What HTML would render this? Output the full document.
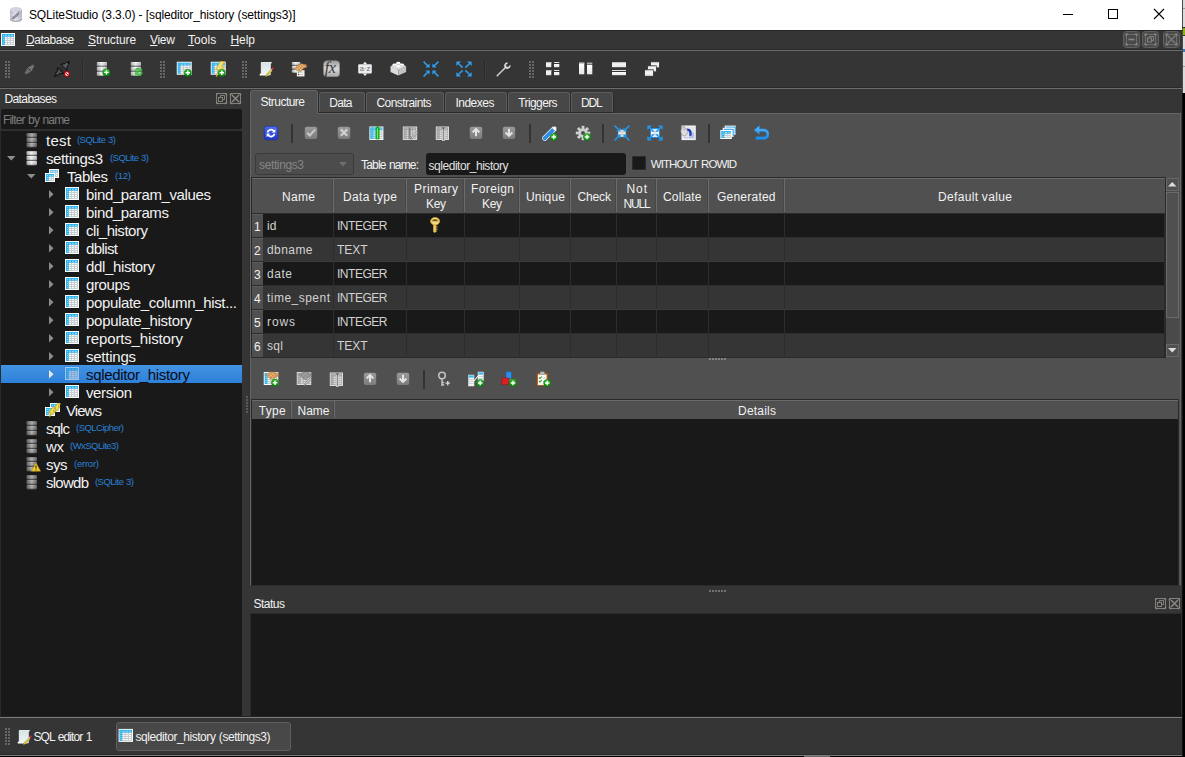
<!DOCTYPE html>
<html><head><meta charset="utf-8"><title>SQLiteStudio (3.3.0) - [sqleditor_history (settings3)]</title>
<style>
html,body{margin:0;padding:0;background:#000;}
body{width:1185px;height:757px;position:relative;overflow:hidden;font-family:"Liberation Sans",sans-serif;}
div,span,svg{position:absolute;display:block;}
span{white-space:nowrap;}
u{text-decoration:underline;text-underline-offset:1px;}
</style></head><body>
<div style="left:1182px;top:0px;width:3px;height:93px;background:#dcdcdc;"></div>
<div style="left:1182px;top:0px;width:1px;height:93px;background:#4a4a4a;"></div>
<div style="left:1183px;top:8px;width:2px;height:1px;background:#9a9a9a;"></div>
<div style="left:1183px;top:27px;width:2px;height:1px;background:#222;"></div>
<div style="left:1183px;top:28px;width:2px;height:7px;background:#8ab800;"></div>
<div style="left:1183px;top:35px;width:2px;height:1px;background:#333;"></div>
<div style="left:1183px;top:49px;width:2px;height:3px;background:#3a7fc0;"></div>
<div style="left:1183px;top:66px;width:2px;height:1px;background:#9a9a9a;"></div>
<div style="left:1182px;top:93px;width:1px;height:663px;background:#111;"></div>
<div style="left:0px;top:0px;width:1182px;height:30px;background:#fff;"></div>
<div style="left:0px;top:30px;width:1182px;height:726px;background:#353535;"></div>
<div style="left:0px;top:30px;width:1182px;height:1px;background:#262626;"></div>
<div style="left:0px;top:49px;width:1182px;height:1px;background:#2a2a2a;"></div>
<div style="left:0px;top:50px;width:1182px;height:1px;background:#6c6c6c;"></div>
<div style="left:0px;top:87px;width:1182px;height:1px;background:#2a2a2a;"></div>
<div style="left:0px;top:88px;width:1182px;height:1px;background:#6c6c6c;"></div>
<div style="left:1px;top:109px;width:241px;height:20px;background:#191919;border-radius:2px;"></div>
<div style="left:0px;top:129px;width:242px;height:2px;background:#2f2f2f;"></div>
<div style="left:0px;top:131px;width:242px;height:586px;background:#191919;"></div>
<div style="left:0px;top:131px;width:1px;height:586px;background:#2a2a2a;"></div>
<div style="left:1px;top:365px;width:241px;height:18px;background:linear-gradient(#4393e3,#2d81d9);"></div>
<div style="left:249px;top:91px;width:1px;height:495px;background:#303030;"></div>
<div style="left:250px;top:113px;width:931px;height:473px;background:#505050;box-sizing:border-box;border:1px solid #646464;border-bottom-color:#3a3a3a;"></div>
<div style="left:250px;top:613px;width:932px;height:104px;background:#2a2a2a;"></div>
<div style="left:251px;top:614px;width:930px;height:102px;background:#191919;"></div>
<div style="left:0px;top:716px;width:1182px;height:1px;background:#222;"></div>
<div style="left:0px;top:717px;width:1182px;height:1px;background:#7a7a7a;"></div>
<div style="left:0px;top:754px;width:1182px;height:1px;background:#2a2a2a;"></div>
<div style="left:0px;top:755px;width:1182px;height:1px;background:#7c7c7c;"></div>
<div style="left:804px;top:756px;width:26px;height:1px;background:#6a6a6a;"></div>
<svg width="0" height="0" style="left:0;top:0"><defs>
<linearGradient id="gdb" x1="0" x2="1" y1="0" y2="0"><stop offset="0" stop-color="#a2a2a2"/><stop offset=".45" stop-color="#efefef"/><stop offset="1" stop-color="#aeaeb6"/></linearGradient>
<linearGradient id="gdbd" x1="0" x2="1" y1="0" y2="0"><stop offset="0" stop-color="#5a5a5a"/><stop offset=".5" stop-color="#adadad"/><stop offset="1" stop-color="#606060"/></linearGradient>
<linearGradient id="gwin" x1="0" x2="0" y1="0" y2="1"><stop offset="0" stop-color="#ffffff"/><stop offset="1" stop-color="#e6e6e6"/></linearGradient>
<linearGradient id="ggreen" x1="0" x2="0" y1="0" y2="1"><stop offset="0" stop-color="#35c435"/><stop offset="1" stop-color="#0a8a0a"/></linearGradient>
<linearGradient id="gblue" x1="0" x2="0" y1="0" y2="1"><stop offset="0" stop-color="#4d6df0"/><stop offset="1" stop-color="#1f36c8"/></linearGradient>
<linearGradient id="ggray" x1="0" x2="0" y1="0" y2="1"><stop offset="0" stop-color="#9a9a9a"/><stop offset="1" stop-color="#7c7c7c"/></linearGradient>
<linearGradient id="gfx" x1="0" x2="0" y1="0" y2="1"><stop offset="0" stop-color="#9b9b9b"/><stop offset=".5" stop-color="#d8d8d8"/><stop offset="1" stop-color="#a8a8a8"/></linearGradient>
<linearGradient id="gcyan" x1="0" x2="0" y1="0" y2="1"><stop offset="0" stop-color="#35b4f2"/><stop offset="1" stop-color="#1d8fe0"/></linearGradient>
<linearGradient id="gtitle" x1="0" x2="1" y1="0" y2="0"><stop offset="0" stop-color="#b4b5c4"/><stop offset=".45" stop-color="#dedfe8"/><stop offset="1" stop-color="#adaebd"/></linearGradient>
<linearGradient id="gpage" x1="0" x2="0" y1="0" y2="1"><stop offset="0" stop-color="#d6e4e4"/><stop offset="1" stop-color="#f0f6f6"/></linearGradient>
<linearGradient id="gundo" x1="0" x2="0" y1="0" y2="1"><stop offset="0" stop-color="#5cbaf8"/><stop offset="1" stop-color="#1c8cec"/></linearGradient>
</defs></svg>
<svg style="left:9px;top:6px" width="14" height="17" viewBox="0 0 14 17"><path d="M1 3.500v10a6 2.600 0 0 0 12 0V3.500z" fill="url(#gtitle)"/><ellipse cx="7" cy="3.500" rx="6" ry="2.600" fill="#d3d4e0"/><path d="M1 7.300a6 2.400 0 0 0 12 0M1 10.600a6 2.400 0 0 0 12 0" fill="none" stroke="#eeeef4" stroke-width=".7" opacity=".8"/><path d="M2.200 12.500L10.800 4.500 9.500 8.200 11.500 7.800 4.500 13.600z" fill="#7f808e" opacity=".85"/><path d="M1.200 13.500a6 2.600 0 0 0 11.600 0" fill="none" stroke="#9a9aa8" stroke-width=".8"/></svg>
<span style="left:29.00px;top:7.00px;height:16px;line-height:16px;font-size:12px;color:#000;letter-spacing:-0.129px;word-spacing:0.129px;">SQLiteStudio (3.3.0) - [sqleditor_history (settings3)]</span>
<svg style="left:1040px;top:0" width="142" height="30" viewBox="0 0 142 30"><path d="M23 14.500H33" stroke="#000" stroke-width="1"/><rect x="68.500" y="9.500" width="9" height="9" fill="none" stroke="#000" stroke-width="1"/><path d="M114 9l10 10M124 9l-10 10" stroke="#000" stroke-width="1.100"/></svg>
<svg style="left:0px;top:32px" width="16" height="16" viewBox="0 0 16 16"><rect x="1" y="1" width="14" height="13" fill="#fafdfd"/><rect x="2" y="2" width="12" height="11" fill="#c4cccc"/><rect x="2" y="2" width="12" height="2.6" fill="#2fb3f0"/><rect x="2" y="2" width="2.7" height="11" fill="#2fb3f0"/><rect x="2.90" y="2.90" width="1" height="1.00" fill="#8adcf9"/><rect x="5.00" y="2.90" width="1.98" height="1.00" fill="#8adcf9"/><rect x="8.00" y="2.90" width="1.98" height="1.00" fill="#8adcf9"/><rect x="11.00" y="2.90" width="1.98" height="1.00" fill="#8adcf9"/><rect x="2.90" y="5.10" width="1" height="1.00" fill="#8adcf9"/><rect x="5.00" y="5.10" width="1.98" height="1.00" fill="#ffffff"/><rect x="8.00" y="5.10" width="1.98" height="1.00" fill="#ffffff"/><rect x="11.00" y="5.10" width="1.98" height="1.00" fill="#ffffff"/><rect x="2.90" y="7.10" width="1" height="1.00" fill="#8adcf9"/><rect x="5.00" y="7.10" width="1.98" height="1.00" fill="#ffffff"/><rect x="8.00" y="7.10" width="1.98" height="1.00" fill="#ffffff"/><rect x="11.00" y="7.10" width="1.98" height="1.00" fill="#ffffff"/><rect x="2.90" y="9.10" width="1" height="1.00" fill="#8adcf9"/><rect x="5.00" y="9.10" width="1.98" height="1.00" fill="#ffffff"/><rect x="8.00" y="9.10" width="1.98" height="1.00" fill="#ffffff"/><rect x="11.00" y="9.10" width="1.98" height="1.00" fill="#ffffff"/><rect x="2.90" y="11.10" width="1" height="1.00" fill="#8adcf9"/><rect x="5.00" y="11.10" width="1.98" height="1.00" fill="#ffffff"/><rect x="8.00" y="11.10" width="1.98" height="1.00" fill="#ffffff"/><rect x="11.00" y="11.10" width="1.98" height="1.00" fill="#ffffff"/></svg>
<span style="left:26.00px;top:32.00px;height:16px;line-height:16px;font-size:12px;color:#f2f2f2;letter-spacing:-0.454px;"><u>D</u>atabase</span>
<span style="left:88.00px;top:32.00px;height:16px;line-height:16px;font-size:12px;color:#f2f2f2;letter-spacing:-0.061px;"><u>S</u>tructure</span>
<span style="left:150.00px;top:32.00px;height:16px;line-height:16px;font-size:12px;color:#f2f2f2;letter-spacing:-0.292px;"><u>V</u>iew</span>
<span style="left:188.00px;top:32.00px;height:16px;line-height:16px;font-size:12px;color:#f2f2f2;letter-spacing:0.050px;"><u>T</u>ools</span>
<span style="left:230.50px;top:32.00px;height:16px;line-height:16px;font-size:12px;color:#f2f2f2;letter-spacing:-0.062px;"><u>H</u>elp</span>
<svg style="left:1123px;top:31px" width="17" height="17" viewBox="0 0 17 17"><rect x=".5" y=".5" width="16" height="16" rx="3" fill="#4a4a4a" stroke="#606060"/><rect x="3.500" y="3.500" width="10" height="10" fill="none" stroke="#77746f" stroke-width=".8"/><path d="M3 5V3H5M12 3H14V5M14 12V14H12M5 14H3V12" fill="none" stroke="#a29e97" stroke-width=".8"/><path d="M5.500 8.500H11.500" stroke="#8a8782" stroke-width="1.600"/></svg>
<svg style="left:1142px;top:31px" width="17" height="17" viewBox="0 0 17 17"><rect x=".5" y=".5" width="16" height="16" rx="3" fill="#4a4a4a" stroke="#606060"/><rect x="3.500" y="3.500" width="10" height="10" fill="none" stroke="#77746f" stroke-width=".8"/><path d="M3 5V3H5M12 3H14V5M14 12V14H12M5 14H3V12" fill="none" stroke="#a29e97" stroke-width=".8"/><rect x="5.500" y="7" width="4" height="4" fill="none" stroke="#8a8782" stroke-width=".9"/><path d="M7.500 6.500V5.500h4v4h-1.500" fill="none" stroke="#8a8782" stroke-width=".9"/></svg>
<svg style="left:1163px;top:31px" width="17" height="17" viewBox="0 0 17 17"><rect x=".5" y=".5" width="16" height="16" rx="3" fill="#4a4a4a" stroke="#606060"/><rect x="3.500" y="3.500" width="10" height="10" fill="none" stroke="#77746f" stroke-width=".8"/><path d="M3 5V3H5M12 3H14V5M14 12V14H12M5 14H3V12" fill="none" stroke="#a29e97" stroke-width=".8"/><path d="M4.500 4.500l8 8M12.500 4.500l-8 8" stroke="#7e7b76" stroke-width="1.300"/></svg>
<svg style="left:5px;top:61px" width="5" height="18" viewBox="0 0 5 18"><rect x="0" y="0" width="2" height="2" fill="#666"/><rect x="3" y="0" width="2" height="2" fill="#666"/><rect x="0" y="3" width="2" height="2" fill="#666"/><rect x="3" y="3" width="2" height="2" fill="#666"/><rect x="0" y="6" width="2" height="2" fill="#666"/><rect x="3" y="6" width="2" height="2" fill="#666"/><rect x="0" y="9" width="2" height="2" fill="#666"/><rect x="3" y="9" width="2" height="2" fill="#666"/><rect x="0" y="12" width="2" height="2" fill="#666"/><rect x="3" y="12" width="2" height="2" fill="#666"/><rect x="0" y="15" width="2" height="2" fill="#666"/><rect x="3" y="15" width="2" height="2" fill="#666"/></svg>
<svg style="left:21px;top:61px" width="16" height="16" viewBox="0 0 16 16"><g transform="translate(.5 .5) rotate(-45 8 8) translate(8 8) scale(.78) translate(-8 -8)"><path d="M-4 8H20" stroke="#434343" stroke-width=".9"/><path d="M.8 6.200H3.500L7.600 4.200V11.800L3.500 9.800H.8z" fill="#6c6c6c"/><path d="M15.200 6.200H12.500L8.400 4.200V11.800L12.500 9.800H15.200z" fill="#747474"/><path d="M8 3.800V12.200" stroke="#2c2c2c" stroke-width=".8"/></g></svg>
<svg style="left:54px;top:61px" width="16" height="16" viewBox="0 0 16 16"><g transform="rotate(-45 8 8)"><path d="M-3.500 8H.5M15.500 8H19" stroke="#0a0a0a" stroke-width="1.200"/><path d="M6 6.800H8.300M6 9.200H8.300" stroke="#151515" stroke-width=".8"/><path d="M0 6.300H2.800L6 3.800V12.200L2.800 9.700H0z" fill="#4d4d58" stroke="#050505" stroke-width=".9" stroke-linejoin="round"/><path d="M16.500 6.300H13.700L10.500 3.800V12.200L13.700 9.700H16.500z" fill="#5a5a5e" stroke="#050505" stroke-width=".9" stroke-linejoin="round"/></g><circle cx="12.900" cy="13" r="3" fill="#c1121a" stroke="#7c0b0f" stroke-width=".5"/><circle cx="12.900" cy="13" r="1.700" fill="#fff"/><path d="M11.400 11.800L14.400 14.200" stroke="#c1121a" stroke-width="1"/></svg>
<div style="left:82px;top:60px;width:1px;height:19px;background:#2a2a2a;"></div>
<div style="left:83px;top:60px;width:1px;height:19px;background:#3d3d3d;"></div>
<svg style="left:94px;top:61px" width="16" height="16" viewBox="0 0 16 16"><rect x="2.8" y="1.05" width="10.2" height="4.30" rx="1" fill="url(#gdb)"/><rect x="2.8" y="1.05" width="10.2" height="1" rx=".5" fill="#fff" opacity=".35"/><rect x="2.8" y="4.35" width="10.2" height="1" rx=".5" fill="#000" opacity=".25"/><rect x="2.8" y="5.85" width="10.2" height="4.30" rx="1" fill="url(#gdb)"/><rect x="2.8" y="5.85" width="10.2" height="1" rx=".5" fill="#fff" opacity=".35"/><rect x="2.8" y="9.15" width="10.2" height="1" rx=".5" fill="#000" opacity=".25"/><rect x="2.8" y="10.65" width="10.2" height="4.30" rx="1" fill="url(#gdb)"/><rect x="2.8" y="10.65" width="10.2" height="1" rx=".5" fill="#fff" opacity=".35"/><rect x="2.8" y="13.95" width="10.2" height="1" rx=".5" fill="#000" opacity=".25"/><circle cx="12.4" cy="11.4" r="3.7" fill="url(#ggreen)" stroke="#0a6e0a" stroke-width=".5"/><path d="M10.2 11.4H14.600000000000001M12.4 9.2V13.600000000000001" stroke="#fff" stroke-width="1.4"/></svg>
<svg style="left:128px;top:61px" width="16" height="16" viewBox="0 0 16 16"><rect x="2.8" y="1.05" width="10.2" height="4.30" rx="1" fill="url(#gdb)"/><rect x="2.8" y="1.05" width="10.2" height="1" rx=".5" fill="#fff" opacity=".35"/><rect x="2.8" y="4.35" width="10.2" height="1" rx=".5" fill="#000" opacity=".25"/><rect x="2.8" y="5.85" width="10.2" height="4.30" rx="1" fill="url(#gdb)"/><rect x="2.8" y="5.85" width="10.2" height="1" rx=".5" fill="#fff" opacity=".35"/><rect x="2.8" y="9.15" width="10.2" height="1" rx=".5" fill="#000" opacity=".25"/><rect x="2.8" y="10.65" width="10.2" height="4.30" rx="1" fill="url(#gdb)"/><rect x="2.8" y="10.65" width="10.2" height="1" rx=".5" fill="#fff" opacity=".35"/><rect x="2.8" y="13.95" width="10.2" height="1" rx=".5" fill="#000" opacity=".25"/><path d="M6.5 10.5a3.6 3.6 0 0 1 6.3-2.2l1-1v3.2h-3.2l1.1-1.1a2.2 2.2 0 0 0-3.8 1.1z" fill="#55d255" stroke="#1c9c1c" stroke-width=".5"/><path d="M14.6 11.2a3.6 3.6 0 0 1-6.3 2.2l-1 1v-3.2h3.2l-1.1 1.1a2.2 2.2 0 0 0 3.8-1.1z" fill="#55d255" stroke="#1c9c1c" stroke-width=".5"/></svg>
<svg style="left:160px;top:61px" width="5" height="18" viewBox="0 0 5 18"><rect x="0" y="0" width="2" height="2" fill="#666"/><rect x="3" y="0" width="2" height="2" fill="#666"/><rect x="0" y="3" width="2" height="2" fill="#666"/><rect x="3" y="3" width="2" height="2" fill="#666"/><rect x="0" y="6" width="2" height="2" fill="#666"/><rect x="3" y="6" width="2" height="2" fill="#666"/><rect x="0" y="9" width="2" height="2" fill="#666"/><rect x="3" y="9" width="2" height="2" fill="#666"/><rect x="0" y="12" width="2" height="2" fill="#666"/><rect x="3" y="12" width="2" height="2" fill="#666"/><rect x="0" y="15" width="2" height="2" fill="#666"/><rect x="3" y="15" width="2" height="2" fill="#666"/></svg>
<svg style="left:176px;top:61px" width="16" height="16" viewBox="0 0 16 16"><rect x="0.75" y="0.75" width="15" height="13" fill="#fafdfd"/><rect x="1.75" y="1.75" width="13" height="11" fill="#c4cccc"/><rect x="1.75" y="1.75" width="13" height="2.6" fill="#2fb3f0"/><rect x="1.75" y="1.75" width="2.7" height="11" fill="#2fb3f0"/><rect x="2.65" y="2.65" width="1" height="1.00" fill="#8adcf9"/><rect x="4.75" y="2.65" width="2.20" height="1.00" fill="#8adcf9"/><rect x="8.08" y="2.65" width="2.20" height="1.00" fill="#8adcf9"/><rect x="11.42" y="2.65" width="2.20" height="1.00" fill="#8adcf9"/><rect x="2.65" y="4.85" width="1" height="1.00" fill="#8adcf9"/><rect x="4.75" y="4.85" width="2.20" height="1.00" fill="#ffffff"/><rect x="8.08" y="4.85" width="2.20" height="1.00" fill="#ffffff"/><rect x="11.42" y="4.85" width="2.20" height="1.00" fill="#ffffff"/><rect x="2.65" y="6.85" width="1" height="1.00" fill="#8adcf9"/><rect x="4.75" y="6.85" width="2.20" height="1.00" fill="#ffffff"/><rect x="8.08" y="6.85" width="2.20" height="1.00" fill="#ffffff"/><rect x="11.42" y="6.85" width="2.20" height="1.00" fill="#ffffff"/><rect x="2.65" y="8.85" width="1" height="1.00" fill="#8adcf9"/><rect x="4.75" y="8.85" width="2.20" height="1.00" fill="#ffffff"/><rect x="8.08" y="8.85" width="2.20" height="1.00" fill="#ffffff"/><rect x="11.42" y="8.85" width="2.20" height="1.00" fill="#ffffff"/><rect x="2.65" y="10.85" width="1" height="1.00" fill="#8adcf9"/><rect x="4.75" y="10.85" width="2.20" height="1.00" fill="#ffffff"/><rect x="8.08" y="10.85" width="2.20" height="1.00" fill="#ffffff"/><rect x="11.42" y="10.85" width="2.20" height="1.00" fill="#ffffff"/><circle cx="11.8" cy="11.8" r="3.6" fill="url(#ggreen)" stroke="#0a6e0a" stroke-width=".5"/><path d="M9.600000000000001 11.8H14.0M11.8 9.600000000000001V14.0" stroke="#fff" stroke-width="1.4"/></svg>
<svg style="left:210px;top:61px" width="16" height="16" viewBox="0 0 16 16"><rect x="0.75" y="0.75" width="15" height="13" fill="#fafdfd"/><rect x="1.75" y="1.75" width="13" height="11" fill="#c4cccc"/><rect x="1.75" y="1.75" width="13" height="2.6" fill="#2fb3f0"/><rect x="1.75" y="1.75" width="2.7" height="11" fill="#2fb3f0"/><rect x="2.65" y="2.65" width="1" height="1.00" fill="#8adcf9"/><rect x="4.75" y="2.65" width="2.20" height="1.00" fill="#8adcf9"/><rect x="8.08" y="2.65" width="2.20" height="1.00" fill="#8adcf9"/><rect x="11.42" y="2.65" width="2.20" height="1.00" fill="#8adcf9"/><rect x="2.65" y="4.85" width="1" height="1.00" fill="#8adcf9"/><rect x="4.75" y="4.85" width="2.20" height="1.00" fill="#ffffff"/><rect x="8.08" y="4.85" width="2.20" height="1.00" fill="#ffffff"/><rect x="11.42" y="4.85" width="2.20" height="1.00" fill="#ffffff"/><rect x="2.65" y="6.85" width="1" height="1.00" fill="#8adcf9"/><rect x="4.75" y="6.85" width="2.20" height="1.00" fill="#ffffff"/><rect x="8.08" y="6.85" width="2.20" height="1.00" fill="#ffffff"/><rect x="11.42" y="6.85" width="2.20" height="1.00" fill="#ffffff"/><rect x="2.65" y="8.85" width="1" height="1.00" fill="#8adcf9"/><rect x="4.75" y="8.85" width="2.20" height="1.00" fill="#ffffff"/><rect x="8.08" y="8.85" width="2.20" height="1.00" fill="#ffffff"/><rect x="11.42" y="8.85" width="2.20" height="1.00" fill="#ffffff"/><rect x="2.65" y="10.85" width="1" height="1.00" fill="#8adcf9"/><rect x="4.75" y="10.85" width="2.20" height="1.00" fill="#ffffff"/><rect x="8.08" y="10.85" width="2.20" height="1.00" fill="#ffffff"/><rect x="11.42" y="10.85" width="2.20" height="1.00" fill="#ffffff"/><path d="M4.300 0L7.600 0 5.200 3.300 7.200 3.300 1.300 9.300 3 5 .8 5z" transform="translate(4.500 .4) scale(1.350 1.660)" fill="#f3e27a" stroke="#c2a51a" stroke-width=".5" stroke-linejoin="round"/><circle cx="11.8" cy="11.8" r="3.6" fill="url(#ggreen)" stroke="#0a6e0a" stroke-width=".5"/><path d="M9.600000000000001 11.8H14.0M11.8 9.600000000000001V14.0" stroke="#fff" stroke-width="1.4"/></svg>
<svg style="left:242px;top:61px" width="5" height="18" viewBox="0 0 5 18"><rect x="0" y="0" width="2" height="2" fill="#666"/><rect x="3" y="0" width="2" height="2" fill="#666"/><rect x="0" y="3" width="2" height="2" fill="#666"/><rect x="3" y="3" width="2" height="2" fill="#666"/><rect x="0" y="6" width="2" height="2" fill="#666"/><rect x="3" y="6" width="2" height="2" fill="#666"/><rect x="0" y="9" width="2" height="2" fill="#666"/><rect x="3" y="9" width="2" height="2" fill="#666"/><rect x="0" y="12" width="2" height="2" fill="#666"/><rect x="3" y="12" width="2" height="2" fill="#666"/><rect x="0" y="15" width="2" height="2" fill="#666"/><rect x="3" y="15" width="2" height="2" fill="#666"/></svg>
<svg style="left:258px;top:61px" width="16" height="16" viewBox="0 0 16 16"><path d="M3.300 1.500h10.200l-1.200 1.500v10.700h-10.300l1.300-1.700z" fill="url(#gpage)" stroke="#fbffff" stroke-width=".8"/><path d="M1.800 13.800h9.500" stroke="#fff" stroke-width="1.300"/><g transform="translate(0 .8)"><path d="M7.300 15l.6-2 5-5 1.300 1.300-5 5z" fill="#e9d85c" stroke="#8a7410" stroke-width=".45"/><path d="M8.800 13.800l1-1M10 12.600l1-1M11.200 11.400l1-1" stroke="#a08a1c" stroke-width=".5"/><path d="M13.200 8.300l.8-.8" stroke="#fff" stroke-width="1.200"/><circle cx="14.600" cy="6.800" r="1.100" fill="#e02a2a"/></g></svg>
<svg style="left:291px;top:61px" width="16" height="16" viewBox="0 0 16 16"><rect x="0.8" y="1.05" width="8.6" height="3.33" rx="1" fill="url(#gdb)"/><rect x="0.8" y="1.05" width="8.6" height="1" rx=".5" fill="#fff" opacity=".35"/><rect x="0.8" y="3.38" width="8.6" height="1" rx=".5" fill="#000" opacity=".25"/><rect x="0.8" y="4.88" width="8.6" height="3.33" rx="1" fill="url(#gdb)"/><rect x="0.8" y="4.88" width="8.6" height="1" rx=".5" fill="#fff" opacity=".35"/><rect x="0.8" y="7.22" width="8.6" height="1" rx=".5" fill="#000" opacity=".25"/><rect x="0.8" y="8.72" width="8.6" height="3.33" rx="1" fill="url(#gdb)"/><rect x="0.8" y="8.72" width="8.6" height="1" rx=".5" fill="#fff" opacity=".35"/><rect x="0.8" y="11.05" width="8.6" height="1" rx=".5" fill="#000" opacity=".25"/><rect x="6" y="9.200" width="7.300" height="6" fill="#f4f4f4" stroke="#d0d0d0" stroke-width=".4"/><rect x="7" y="10.500" width="1.300" height="1.300" fill="#22aa22"/><rect x="7" y="12.800" width="1.300" height="1.300" fill="#d62728"/><path d="M9 11.200h3.300M9 13.500h3.300" stroke="#b4b4b4" stroke-width=".7"/><path d="M3.500 8L6 4.600 10.500 2.800 15.300 3.800 15.800 6 12.200 7.600 10 10.600 7 9.600z" fill="#e8b478" stroke="#a86a2a" stroke-width=".5" stroke-linejoin="round"/><path d="M5.500 6l3.500 3.800M7.500 4.500l3.500 4M9.500 3.500l3.500 3.500M12 3.200l3 2.600M5 8.500L10 3.200M7.500 9.500l5.500-6M10.500 9.500l4.500-5" stroke="#a86a2a" stroke-width=".4" fill="none"/></svg>
<svg style="left:323px;top:60px" width="17" height="17" viewBox="0 0 17 17"><rect x=".6" y=".8" width="16" height="16" rx="3.500" fill="url(#gfx)" stroke="#8e8e8e" stroke-width=".6"/><text x="1.800" y="12.800" font-family="Liberation Serif,serif" font-style="italic" font-size="16" fill="#383838" letter-spacing="-.6">fx</text></svg>
<svg style="left:357px;top:61px" width="16" height="16" viewBox="0 0 16 16"><rect x="1.200" y="3.300" width="13.600" height="9.200" rx="1" fill="#ececec"/><path d="M8 .8l2.200 2.500h-4.400zM8 15l2.200-2.500h-4.400z" fill="#f0f0f0"/><text x="2.800" y="10.300" font-family="Liberation Sans,sans-serif" font-size="7.500" fill="#6e6e6e">a·z</text></svg>
<svg style="left:390px;top:60px" width="17" height="17" viewBox="0 0 17 17"><path d="M.5 6.200l7.800 3.600v5.700l-7.800-3.600z" fill="#dcdcdc"/><path d="M16.100 6.200l-7.800 3.600v5.700l7.800-3.600z" fill="#c2c2c2"/><path d="M.5 6.200L8.300 2.600 16.100 6.200 8.300 9.800z" fill="#efefef"/><path d="M6.200000000000001 2.9000000000000004v1.300a2.100 1.100 0 0 0 4.200 0v-1.300z" fill="#d0d0d0"/><ellipse cx="8.3" cy="2.9000000000000004" rx="2.100" ry="1.100" fill="#fbfbfb"/><path d="M2.4999999999999996 4.6000000000000005v1.300a2.100 1.100 0 0 0 4.200 0v-1.300z" fill="#d0d0d0"/><ellipse cx="4.6" cy="4.6000000000000005" rx="2.100" ry="1.100" fill="#fbfbfb"/><path d="M9.9 4.6000000000000005v1.300a2.100 1.100 0 0 0 4.200 0v-1.300z" fill="#d0d0d0"/><ellipse cx="12" cy="4.6000000000000005" rx="2.100" ry="1.100" fill="#fbfbfb"/><path d="M6.200000000000001 6.4v1.300a2.100 1.100 0 0 0 4.200 0v-1.300z" fill="#d0d0d0"/><ellipse cx="8.3" cy="6.4" rx="2.100" ry="1.100" fill="#fbfbfb"/></svg>
<svg style="left:423px;top:61px" width="16" height="16" viewBox="0 0 16 16"><g transform="translate(8 8) scale(1 1) translate(-7.800 -7.800)"><path d="M.4 .4L4.500 4.500" stroke="#2f9ff0" stroke-width="1.500"/><path d="M6.400 6.400V2.200L2.200 6.400z" fill="#2f9ff0"/></g><g transform="translate(8 8) scale(-1 1) translate(-7.800 -7.800)"><path d="M.4 .4L4.500 4.500" stroke="#2f9ff0" stroke-width="1.500"/><path d="M6.400 6.400V2.200L2.200 6.400z" fill="#2f9ff0"/></g><g transform="translate(8 8) scale(1 -1) translate(-7.800 -7.800)"><path d="M.4 .4L4.500 4.500" stroke="#2f9ff0" stroke-width="1.500"/><path d="M6.400 6.400V2.200L2.200 6.400z" fill="#2f9ff0"/></g><g transform="translate(8 8) scale(-1 -1) translate(-7.800 -7.800)"><path d="M.4 .4L4.500 4.500" stroke="#2f9ff0" stroke-width="1.500"/><path d="M6.400 6.400V2.200L2.200 6.400z" fill="#2f9ff0"/></g></svg>
<svg style="left:456px;top:61px" width="16" height="16" viewBox="0 0 16 16"><g transform="translate(8 8) scale(1 1) translate(-7.800 -7.800)"><path d="M6.400 6.400L2.500 2.500" stroke="#2f9ff0" stroke-width="1.500"/><path d="M.2 .2H4.800L.2 4.800z" fill="#2f9ff0"/></g><g transform="translate(8 8) scale(-1 1) translate(-7.800 -7.800)"><path d="M6.400 6.400L2.500 2.500" stroke="#2f9ff0" stroke-width="1.500"/><path d="M.2 .2H4.800L.2 4.800z" fill="#2f9ff0"/></g><g transform="translate(8 8) scale(1 -1) translate(-7.800 -7.800)"><path d="M6.400 6.400L2.500 2.500" stroke="#2f9ff0" stroke-width="1.500"/><path d="M.2 .2H4.800L.2 4.800z" fill="#2f9ff0"/></g><g transform="translate(8 8) scale(-1 -1) translate(-7.800 -7.800)"><path d="M6.400 6.400L2.500 2.500" stroke="#2f9ff0" stroke-width="1.500"/><path d="M.2 .2H4.800L.2 4.800z" fill="#2f9ff0"/></g></svg>
<div style="left:484px;top:60px;width:1px;height:19px;background:#2a2a2a;"></div>
<div style="left:485px;top:60px;width:1px;height:19px;background:#3d3d3d;"></div>
<svg style="left:496px;top:61px" width="16" height="16" viewBox="0 0 16 16"><path d="M1.2 14.8L9.5 6.5" stroke="#cfcfcf" stroke-width="1.5" stroke-linecap="round"/><path d="M9.2 7a3.3 3.3 0 0 1 1.6-5.4l.9.3-2 2 .6 1.8 1.8.6 2-2 .3.9a3.3 3.3 0 0 1-5.2 1.8z" fill="#d9d9d9" stroke="#eee" stroke-width=".4"/></svg>
<svg style="left:529px;top:61px" width="5" height="18" viewBox="0 0 5 18"><rect x="0" y="0" width="2" height="2" fill="#666"/><rect x="3" y="0" width="2" height="2" fill="#666"/><rect x="0" y="3" width="2" height="2" fill="#666"/><rect x="3" y="3" width="2" height="2" fill="#666"/><rect x="0" y="6" width="2" height="2" fill="#666"/><rect x="3" y="6" width="2" height="2" fill="#666"/><rect x="0" y="9" width="2" height="2" fill="#666"/><rect x="3" y="9" width="2" height="2" fill="#666"/><rect x="0" y="12" width="2" height="2" fill="#666"/><rect x="3" y="12" width="2" height="2" fill="#666"/><rect x="0" y="15" width="2" height="2" fill="#666"/><rect x="3" y="15" width="2" height="2" fill="#666"/></svg>
<svg style="left:545px;top:61px" width="16" height="16" viewBox="0 0 16 16"><rect x="1" y="1" width="5.3" height="5.2" fill="url(#gwin)"/><rect x="1" y="1" width="5.3" height="1.200" fill="#c4c4c4"/><rect x="9" y="1" width="5.3" height="1" fill="#e2e2e2"/><rect x="9" y="3" width="5.3" height="3.2" fill="url(#gwin)"/><rect x="1" y="9" width="5.3" height="5.2" fill="url(#gwin)"/><rect x="1" y="9" width="5.3" height="1.200" fill="#c4c4c4"/><rect x="9" y="9" width="5.3" height="1" fill="#e2e2e2"/><rect x="9" y="11" width="5.3" height="3.2" fill="url(#gwin)"/></svg>
<svg style="left:578px;top:61px" width="16" height="16" viewBox="0 0 16 16"><rect x="1" y="1.7" width="5.3" height="11.6" fill="url(#gwin)"/><rect x="1" y="1.7" width="5.3" height="1.200" fill="#c4c4c4"/><rect x="9" y="1.7" width="5.3" height="1" fill="#e2e2e2"/><rect x="9" y="3.7" width="5.3" height="9.6" fill="url(#gwin)"/></svg>
<svg style="left:611px;top:61px" width="16" height="16" viewBox="0 0 16 16"><rect x="1" y="1" width="14" height="5.2" fill="url(#gwin)"/><rect x="1" y="1" width="14" height="1.200" fill="#c4c4c4"/><rect x="1" y="9" width="14" height="1" fill="#e2e2e2"/><rect x="1" y="11" width="14" height="3.2" fill="url(#gwin)"/></svg>
<svg style="left:644px;top:61px" width="16" height="16" viewBox="0 0 16 16"><rect x="6.3" y="0.30000000000000004" width="9.400" height="6.699999999999999" fill="#454545"/><rect x="7" y="1" width="8" height="5.3" fill="url(#gwin)"/><rect x="7" y="1" width="8" height="1.200" fill="#c4c4c4"/><rect x="3.3" y="4.3" width="9.400" height="6.699999999999999" fill="#454545"/><rect x="4" y="5" width="8" height="5.3" fill="url(#gwin)"/><rect x="4" y="5" width="8" height="1.200" fill="#c4c4c4"/><rect x="0.30000000000000004" y="8.3" width="9.400" height="7.199999999999999" fill="#454545"/><rect x="1" y="9" width="8" height="5.8" fill="url(#gwin)"/><rect x="1" y="9" width="8" height="1.200" fill="#c4c4c4"/></svg>
<span style="left:4.50px;top:91.00px;height:16px;line-height:16px;font-size:12px;color:#f2f2f2;letter-spacing:-0.609px;">Databases</span>
<svg style="left:216px;top:93px" width="26" height="12" viewBox="0 0 26 12"><rect x="0.5" y=".5" width="10" height="10" rx="1.800" fill="none" stroke="#8c8882" stroke-width=".9"/><path d="M0.3 2.500V.8a.5.5 0 0 1 .5-.5H2.5M8.5 .3h1.700a.5.5 0 0 1 .5.5V2.500M10.7 8.500v1.700a.5.5 0 0 1-.5.5H8.5M2.5 10.700H0.8a.5.5 0 0 1-.5-.5V8.500" fill="none" stroke="#b0aca4" stroke-width=".7"/><rect x="2.500" y="4.500" width="4" height="4" fill="none" stroke="#8c8882" stroke-width=".9"/><path d="M4.500 4V2.500h4v4H7" fill="none" stroke="#8c8882" stroke-width=".9"/><rect x="14.5" y=".5" width="10" height="10" rx="1.800" fill="none" stroke="#8c8882" stroke-width=".9"/><path d="M14.3 2.500V.8a.5.5 0 0 1 .5-.5H16.5M22.5 .3h1.700a.5.5 0 0 1 .5.5V2.500M24.7 8.500v1.700a.5.5 0 0 1-.5.5H22.5M16.5 10.700H14.8a.5.5 0 0 1-.5-.5V8.500" fill="none" stroke="#b0aca4" stroke-width=".7"/><path d="M16 2l7 7M23 2l-7 7" stroke="#8c8882" stroke-width="1.500"/></svg>
<span style="left:3.00px;top:112.00px;height:16px;line-height:16px;font-size:12px;color:#7d7d7d;letter-spacing:-0.818px;word-spacing:0.818px;">Filter by name</span>
<svg style="left:26px;top:132px" width="12" height="16" viewBox="0 0 12 16"><rect x="0.5" y="1.25" width="10.5" height="4.33" rx="1" fill="url(#gdbd)"/><rect x="0.5" y="1.25" width="10.5" height="1" rx=".5" fill="#fff" opacity=".12"/><rect x="0.5" y="4.58" width="10.5" height="1" rx=".5" fill="#000" opacity=".25"/><rect x="0.5" y="6.08" width="10.5" height="4.33" rx="1" fill="url(#gdbd)"/><rect x="0.5" y="6.08" width="10.5" height="1" rx=".5" fill="#fff" opacity=".12"/><rect x="0.5" y="9.42" width="10.5" height="1" rx=".5" fill="#000" opacity=".25"/><rect x="0.5" y="10.92" width="10.5" height="4.33" rx="1" fill="url(#gdbd)"/><rect x="0.5" y="10.92" width="10.5" height="1" rx=".5" fill="#fff" opacity=".12"/><rect x="0.5" y="14.25" width="10.5" height="1" rx=".5" fill="#000" opacity=".25"/></svg>
<span style="left:46.00px;top:131.00px;height:19px;line-height:19px;font-size:15px;color:#f2f2f2;letter-spacing:0.271px;">test</span>
<span style="left:77.00px;top:132.75px;height:13.5px;line-height:13.5px;font-size:9.5px;color:#2a80d6;letter-spacing:-0.539px;word-spacing:0.539px;">(SQLite 3)</span>
<svg style="left:7px;top:155.5px" width="9" height="5" viewBox="0 0 9 5"><path d="M0 0h8.500L4.250 4.500z" fill="#8c8c8c"/></svg>
<svg style="left:26px;top:150px" width="12" height="16" viewBox="0 0 12 16"><rect x="0.5" y="1.25" width="10.5" height="4.33" rx="1" fill="url(#gdb)"/><rect x="0.5" y="1.25" width="10.5" height="1" rx=".5" fill="#fff" opacity=".35"/><rect x="0.5" y="4.58" width="10.5" height="1" rx=".5" fill="#000" opacity=".25"/><rect x="0.5" y="6.08" width="10.5" height="4.33" rx="1" fill="url(#gdb)"/><rect x="0.5" y="6.08" width="10.5" height="1" rx=".5" fill="#fff" opacity=".35"/><rect x="0.5" y="9.42" width="10.5" height="1" rx=".5" fill="#000" opacity=".25"/><rect x="0.5" y="10.92" width="10.5" height="4.33" rx="1" fill="url(#gdb)"/><rect x="0.5" y="10.92" width="10.5" height="1" rx=".5" fill="#fff" opacity=".35"/><rect x="0.5" y="14.25" width="10.5" height="1" rx=".5" fill="#000" opacity=".25"/></svg>
<span style="left:46.00px;top:149.00px;height:19px;line-height:19px;font-size:15px;color:#f2f2f2;letter-spacing:-0.383px;">settings3</span>
<span style="left:110.00px;top:150.75px;height:13.5px;line-height:13.5px;font-size:9.5px;color:#2a80d6;letter-spacing:-0.539px;word-spacing:0.539px;">(SQLite 3)</span>
<svg style="left:27px;top:173.5px" width="9" height="5" viewBox="0 0 9 5"><path d="M0 0h8.500L4.250 4.500z" fill="#8c8c8c"/></svg>
<svg style="left:45px;top:168px" width="16" height="16" viewBox="0 0 16 16"><rect x="4" y="1" width="10" height="9" fill="#fafdfd"/><rect x="5" y="2" width="8" height="7" fill="#c4cccc"/><rect x="5" y="2" width="8" height="2.500" fill="#7cc4ec"/><rect x="5" y="2" width="2.600" height="7" fill="#7cc4ec"/><rect x="5.9" y="3" width="1" height="1" fill="#bfe4f6"/><rect x="8" y="3" width="2" height="1" fill="#bfe4f6"/><rect x="11" y="3" width="1.200" height="1" fill="#bfe4f6"/><rect x="5.9" y="5" width="1" height="1" fill="#bfe4f6"/><rect x="8" y="5" width="2" height="1" fill="#fff"/><rect x="11" y="5" width="1.200" height="1" fill="#fff"/><rect x="5.9" y="7" width="1" height="1" fill="#bfe4f6"/><rect x="8" y="7" width="2" height="1" fill="#fff"/><rect x="11" y="7" width="1.200" height="1" fill="#fff"/><rect x="0" y="5" width="10" height="9" fill="#fafdfd"/><rect x="1" y="6" width="8" height="7" fill="#c4cccc"/><rect x="1" y="6" width="8" height="2.500" fill="#30b4f1"/><rect x="1" y="6" width="2.600" height="7" fill="#30b4f1"/><rect x="1.9" y="7" width="1" height="1" fill="#9adff9"/><rect x="4" y="7" width="2" height="1" fill="#9adff9"/><rect x="7" y="7" width="1.200" height="1" fill="#9adff9"/><rect x="1.9" y="9" width="1" height="1" fill="#9adff9"/><rect x="4" y="9" width="2" height="1" fill="#fff"/><rect x="7" y="9" width="1.200" height="1" fill="#fff"/><rect x="1.9" y="11" width="1" height="1" fill="#9adff9"/><rect x="4" y="11" width="2" height="1" fill="#fff"/><rect x="7" y="11" width="1.200" height="1" fill="#fff"/></svg>
<span style="left:67.00px;top:167.00px;height:19px;line-height:19px;font-size:15px;color:#f2f2f2;letter-spacing:-0.475px;">Tables</span>
<span style="left:115.00px;top:168.75px;height:13.5px;line-height:13.5px;font-size:9.5px;color:#2a80d6;letter-spacing:-0.292px;">(12)</span>
<svg style="left:49px;top:189.5px" width="5" height="9" viewBox="0 0 5 9"><path d="M0 0v8.500L4.500 4.250z" fill="#8c8c8c"/></svg>
<svg style="left:64px;top:186px" width="16" height="16" viewBox="0 0 16 16"><rect x="1" y="1" width="14" height="13" fill="#fafdfd"/><rect x="2" y="2" width="12" height="11" fill="#c4cccc"/><rect x="2" y="2" width="12" height="2.6" fill="#2fb3f0"/><rect x="2" y="2" width="2.7" height="11" fill="#2fb3f0"/><rect x="2.90" y="2.90" width="1" height="1.00" fill="#8adcf9"/><rect x="5.00" y="2.90" width="1.98" height="1.00" fill="#8adcf9"/><rect x="8.00" y="2.90" width="1.98" height="1.00" fill="#8adcf9"/><rect x="11.00" y="2.90" width="1.98" height="1.00" fill="#8adcf9"/><rect x="2.90" y="5.10" width="1" height="1.00" fill="#8adcf9"/><rect x="5.00" y="5.10" width="1.98" height="1.00" fill="#ffffff"/><rect x="8.00" y="5.10" width="1.98" height="1.00" fill="#ffffff"/><rect x="11.00" y="5.10" width="1.98" height="1.00" fill="#ffffff"/><rect x="2.90" y="7.10" width="1" height="1.00" fill="#8adcf9"/><rect x="5.00" y="7.10" width="1.98" height="1.00" fill="#ffffff"/><rect x="8.00" y="7.10" width="1.98" height="1.00" fill="#ffffff"/><rect x="11.00" y="7.10" width="1.98" height="1.00" fill="#ffffff"/><rect x="2.90" y="9.10" width="1" height="1.00" fill="#8adcf9"/><rect x="5.00" y="9.10" width="1.98" height="1.00" fill="#ffffff"/><rect x="8.00" y="9.10" width="1.98" height="1.00" fill="#ffffff"/><rect x="11.00" y="9.10" width="1.98" height="1.00" fill="#ffffff"/><rect x="2.90" y="11.10" width="1" height="1.00" fill="#8adcf9"/><rect x="5.00" y="11.10" width="1.98" height="1.00" fill="#ffffff"/><rect x="8.00" y="11.10" width="1.98" height="1.00" fill="#ffffff"/><rect x="11.00" y="11.10" width="1.98" height="1.00" fill="#ffffff"/></svg>
<span style="left:86.00px;top:185.00px;height:19px;line-height:19px;font-size:15px;color:#f2f2f2;letter-spacing:-0.371px;">bind_param_values</span>
<svg style="left:49px;top:207.5px" width="5" height="9" viewBox="0 0 5 9"><path d="M0 0v8.500L4.500 4.250z" fill="#8c8c8c"/></svg>
<svg style="left:64px;top:204px" width="16" height="16" viewBox="0 0 16 16"><rect x="1" y="1" width="14" height="13" fill="#fafdfd"/><rect x="2" y="2" width="12" height="11" fill="#c4cccc"/><rect x="2" y="2" width="12" height="2.6" fill="#2fb3f0"/><rect x="2" y="2" width="2.7" height="11" fill="#2fb3f0"/><rect x="2.90" y="2.90" width="1" height="1.00" fill="#8adcf9"/><rect x="5.00" y="2.90" width="1.98" height="1.00" fill="#8adcf9"/><rect x="8.00" y="2.90" width="1.98" height="1.00" fill="#8adcf9"/><rect x="11.00" y="2.90" width="1.98" height="1.00" fill="#8adcf9"/><rect x="2.90" y="5.10" width="1" height="1.00" fill="#8adcf9"/><rect x="5.00" y="5.10" width="1.98" height="1.00" fill="#ffffff"/><rect x="8.00" y="5.10" width="1.98" height="1.00" fill="#ffffff"/><rect x="11.00" y="5.10" width="1.98" height="1.00" fill="#ffffff"/><rect x="2.90" y="7.10" width="1" height="1.00" fill="#8adcf9"/><rect x="5.00" y="7.10" width="1.98" height="1.00" fill="#ffffff"/><rect x="8.00" y="7.10" width="1.98" height="1.00" fill="#ffffff"/><rect x="11.00" y="7.10" width="1.98" height="1.00" fill="#ffffff"/><rect x="2.90" y="9.10" width="1" height="1.00" fill="#8adcf9"/><rect x="5.00" y="9.10" width="1.98" height="1.00" fill="#ffffff"/><rect x="8.00" y="9.10" width="1.98" height="1.00" fill="#ffffff"/><rect x="11.00" y="9.10" width="1.98" height="1.00" fill="#ffffff"/><rect x="2.90" y="11.10" width="1" height="1.00" fill="#8adcf9"/><rect x="5.00" y="11.10" width="1.98" height="1.00" fill="#ffffff"/><rect x="8.00" y="11.10" width="1.98" height="1.00" fill="#ffffff"/><rect x="11.00" y="11.10" width="1.98" height="1.00" fill="#ffffff"/></svg>
<span style="left:86.00px;top:203.00px;height:19px;line-height:19px;font-size:15px;color:#f2f2f2;letter-spacing:-0.375px;">bind_params</span>
<svg style="left:49px;top:225.5px" width="5" height="9" viewBox="0 0 5 9"><path d="M0 0v8.500L4.500 4.250z" fill="#8c8c8c"/></svg>
<svg style="left:64px;top:222px" width="16" height="16" viewBox="0 0 16 16"><rect x="1" y="1" width="14" height="13" fill="#fafdfd"/><rect x="2" y="2" width="12" height="11" fill="#c4cccc"/><rect x="2" y="2" width="12" height="2.6" fill="#2fb3f0"/><rect x="2" y="2" width="2.7" height="11" fill="#2fb3f0"/><rect x="2.90" y="2.90" width="1" height="1.00" fill="#8adcf9"/><rect x="5.00" y="2.90" width="1.98" height="1.00" fill="#8adcf9"/><rect x="8.00" y="2.90" width="1.98" height="1.00" fill="#8adcf9"/><rect x="11.00" y="2.90" width="1.98" height="1.00" fill="#8adcf9"/><rect x="2.90" y="5.10" width="1" height="1.00" fill="#8adcf9"/><rect x="5.00" y="5.10" width="1.98" height="1.00" fill="#ffffff"/><rect x="8.00" y="5.10" width="1.98" height="1.00" fill="#ffffff"/><rect x="11.00" y="5.10" width="1.98" height="1.00" fill="#ffffff"/><rect x="2.90" y="7.10" width="1" height="1.00" fill="#8adcf9"/><rect x="5.00" y="7.10" width="1.98" height="1.00" fill="#ffffff"/><rect x="8.00" y="7.10" width="1.98" height="1.00" fill="#ffffff"/><rect x="11.00" y="7.10" width="1.98" height="1.00" fill="#ffffff"/><rect x="2.90" y="9.10" width="1" height="1.00" fill="#8adcf9"/><rect x="5.00" y="9.10" width="1.98" height="1.00" fill="#ffffff"/><rect x="8.00" y="9.10" width="1.98" height="1.00" fill="#ffffff"/><rect x="11.00" y="9.10" width="1.98" height="1.00" fill="#ffffff"/><rect x="2.90" y="11.10" width="1" height="1.00" fill="#8adcf9"/><rect x="5.00" y="11.10" width="1.98" height="1.00" fill="#ffffff"/><rect x="8.00" y="11.10" width="1.98" height="1.00" fill="#ffffff"/><rect x="11.00" y="11.10" width="1.98" height="1.00" fill="#ffffff"/></svg>
<span style="left:86.00px;top:221.00px;height:19px;line-height:19px;font-size:15px;color:#f2f2f2;letter-spacing:-0.469px;">cli_history</span>
<svg style="left:49px;top:243.5px" width="5" height="9" viewBox="0 0 5 9"><path d="M0 0v8.500L4.500 4.250z" fill="#8c8c8c"/></svg>
<svg style="left:64px;top:240px" width="16" height="16" viewBox="0 0 16 16"><rect x="1" y="1" width="14" height="13" fill="#fafdfd"/><rect x="2" y="2" width="12" height="11" fill="#c4cccc"/><rect x="2" y="2" width="12" height="2.6" fill="#2fb3f0"/><rect x="2" y="2" width="2.7" height="11" fill="#2fb3f0"/><rect x="2.90" y="2.90" width="1" height="1.00" fill="#8adcf9"/><rect x="5.00" y="2.90" width="1.98" height="1.00" fill="#8adcf9"/><rect x="8.00" y="2.90" width="1.98" height="1.00" fill="#8adcf9"/><rect x="11.00" y="2.90" width="1.98" height="1.00" fill="#8adcf9"/><rect x="2.90" y="5.10" width="1" height="1.00" fill="#8adcf9"/><rect x="5.00" y="5.10" width="1.98" height="1.00" fill="#ffffff"/><rect x="8.00" y="5.10" width="1.98" height="1.00" fill="#ffffff"/><rect x="11.00" y="5.10" width="1.98" height="1.00" fill="#ffffff"/><rect x="2.90" y="7.10" width="1" height="1.00" fill="#8adcf9"/><rect x="5.00" y="7.10" width="1.98" height="1.00" fill="#ffffff"/><rect x="8.00" y="7.10" width="1.98" height="1.00" fill="#ffffff"/><rect x="11.00" y="7.10" width="1.98" height="1.00" fill="#ffffff"/><rect x="2.90" y="9.10" width="1" height="1.00" fill="#8adcf9"/><rect x="5.00" y="9.10" width="1.98" height="1.00" fill="#ffffff"/><rect x="8.00" y="9.10" width="1.98" height="1.00" fill="#ffffff"/><rect x="11.00" y="9.10" width="1.98" height="1.00" fill="#ffffff"/><rect x="2.90" y="11.10" width="1" height="1.00" fill="#8adcf9"/><rect x="5.00" y="11.10" width="1.98" height="1.00" fill="#ffffff"/><rect x="8.00" y="11.10" width="1.98" height="1.00" fill="#ffffff"/><rect x="11.00" y="11.10" width="1.98" height="1.00" fill="#ffffff"/></svg>
<span style="left:86.00px;top:239.00px;height:19px;line-height:19px;font-size:15px;color:#f2f2f2;letter-spacing:-0.600px;">dblist</span>
<svg style="left:49px;top:261.5px" width="5" height="9" viewBox="0 0 5 9"><path d="M0 0v8.500L4.500 4.250z" fill="#8c8c8c"/></svg>
<svg style="left:64px;top:258px" width="16" height="16" viewBox="0 0 16 16"><rect x="1" y="1" width="14" height="13" fill="#fafdfd"/><rect x="2" y="2" width="12" height="11" fill="#c4cccc"/><rect x="2" y="2" width="12" height="2.6" fill="#2fb3f0"/><rect x="2" y="2" width="2.7" height="11" fill="#2fb3f0"/><rect x="2.90" y="2.90" width="1" height="1.00" fill="#8adcf9"/><rect x="5.00" y="2.90" width="1.98" height="1.00" fill="#8adcf9"/><rect x="8.00" y="2.90" width="1.98" height="1.00" fill="#8adcf9"/><rect x="11.00" y="2.90" width="1.98" height="1.00" fill="#8adcf9"/><rect x="2.90" y="5.10" width="1" height="1.00" fill="#8adcf9"/><rect x="5.00" y="5.10" width="1.98" height="1.00" fill="#ffffff"/><rect x="8.00" y="5.10" width="1.98" height="1.00" fill="#ffffff"/><rect x="11.00" y="5.10" width="1.98" height="1.00" fill="#ffffff"/><rect x="2.90" y="7.10" width="1" height="1.00" fill="#8adcf9"/><rect x="5.00" y="7.10" width="1.98" height="1.00" fill="#ffffff"/><rect x="8.00" y="7.10" width="1.98" height="1.00" fill="#ffffff"/><rect x="11.00" y="7.10" width="1.98" height="1.00" fill="#ffffff"/><rect x="2.90" y="9.10" width="1" height="1.00" fill="#8adcf9"/><rect x="5.00" y="9.10" width="1.98" height="1.00" fill="#ffffff"/><rect x="8.00" y="9.10" width="1.98" height="1.00" fill="#ffffff"/><rect x="11.00" y="9.10" width="1.98" height="1.00" fill="#ffffff"/><rect x="2.90" y="11.10" width="1" height="1.00" fill="#8adcf9"/><rect x="5.00" y="11.10" width="1.98" height="1.00" fill="#ffffff"/><rect x="8.00" y="11.10" width="1.98" height="1.00" fill="#ffffff"/><rect x="11.00" y="11.10" width="1.98" height="1.00" fill="#ffffff"/></svg>
<span style="left:86.00px;top:257.00px;height:19px;line-height:19px;font-size:15px;color:#f2f2f2;letter-spacing:-0.356px;">ddl_history</span>
<svg style="left:49px;top:279.5px" width="5" height="9" viewBox="0 0 5 9"><path d="M0 0v8.500L4.500 4.250z" fill="#8c8c8c"/></svg>
<svg style="left:64px;top:276px" width="16" height="16" viewBox="0 0 16 16"><rect x="1" y="1" width="14" height="13" fill="#fafdfd"/><rect x="2" y="2" width="12" height="11" fill="#c4cccc"/><rect x="2" y="2" width="12" height="2.6" fill="#2fb3f0"/><rect x="2" y="2" width="2.7" height="11" fill="#2fb3f0"/><rect x="2.90" y="2.90" width="1" height="1.00" fill="#8adcf9"/><rect x="5.00" y="2.90" width="1.98" height="1.00" fill="#8adcf9"/><rect x="8.00" y="2.90" width="1.98" height="1.00" fill="#8adcf9"/><rect x="11.00" y="2.90" width="1.98" height="1.00" fill="#8adcf9"/><rect x="2.90" y="5.10" width="1" height="1.00" fill="#8adcf9"/><rect x="5.00" y="5.10" width="1.98" height="1.00" fill="#ffffff"/><rect x="8.00" y="5.10" width="1.98" height="1.00" fill="#ffffff"/><rect x="11.00" y="5.10" width="1.98" height="1.00" fill="#ffffff"/><rect x="2.90" y="7.10" width="1" height="1.00" fill="#8adcf9"/><rect x="5.00" y="7.10" width="1.98" height="1.00" fill="#ffffff"/><rect x="8.00" y="7.10" width="1.98" height="1.00" fill="#ffffff"/><rect x="11.00" y="7.10" width="1.98" height="1.00" fill="#ffffff"/><rect x="2.90" y="9.10" width="1" height="1.00" fill="#8adcf9"/><rect x="5.00" y="9.10" width="1.98" height="1.00" fill="#ffffff"/><rect x="8.00" y="9.10" width="1.98" height="1.00" fill="#ffffff"/><rect x="11.00" y="9.10" width="1.98" height="1.00" fill="#ffffff"/><rect x="2.90" y="11.10" width="1" height="1.00" fill="#8adcf9"/><rect x="5.00" y="11.10" width="1.98" height="1.00" fill="#ffffff"/><rect x="8.00" y="11.10" width="1.98" height="1.00" fill="#ffffff"/><rect x="11.00" y="11.10" width="1.98" height="1.00" fill="#ffffff"/></svg>
<span style="left:86.00px;top:275.00px;height:19px;line-height:19px;font-size:15px;color:#f2f2f2;letter-spacing:-0.375px;">groups</span>
<svg style="left:49px;top:297.5px" width="5" height="9" viewBox="0 0 5 9"><path d="M0 0v8.500L4.500 4.250z" fill="#8c8c8c"/></svg>
<svg style="left:64px;top:294px" width="16" height="16" viewBox="0 0 16 16"><rect x="1" y="1" width="14" height="13" fill="#fafdfd"/><rect x="2" y="2" width="12" height="11" fill="#c4cccc"/><rect x="2" y="2" width="12" height="2.6" fill="#2fb3f0"/><rect x="2" y="2" width="2.7" height="11" fill="#2fb3f0"/><rect x="2.90" y="2.90" width="1" height="1.00" fill="#8adcf9"/><rect x="5.00" y="2.90" width="1.98" height="1.00" fill="#8adcf9"/><rect x="8.00" y="2.90" width="1.98" height="1.00" fill="#8adcf9"/><rect x="11.00" y="2.90" width="1.98" height="1.00" fill="#8adcf9"/><rect x="2.90" y="5.10" width="1" height="1.00" fill="#8adcf9"/><rect x="5.00" y="5.10" width="1.98" height="1.00" fill="#ffffff"/><rect x="8.00" y="5.10" width="1.98" height="1.00" fill="#ffffff"/><rect x="11.00" y="5.10" width="1.98" height="1.00" fill="#ffffff"/><rect x="2.90" y="7.10" width="1" height="1.00" fill="#8adcf9"/><rect x="5.00" y="7.10" width="1.98" height="1.00" fill="#ffffff"/><rect x="8.00" y="7.10" width="1.98" height="1.00" fill="#ffffff"/><rect x="11.00" y="7.10" width="1.98" height="1.00" fill="#ffffff"/><rect x="2.90" y="9.10" width="1" height="1.00" fill="#8adcf9"/><rect x="5.00" y="9.10" width="1.98" height="1.00" fill="#ffffff"/><rect x="8.00" y="9.10" width="1.98" height="1.00" fill="#ffffff"/><rect x="11.00" y="9.10" width="1.98" height="1.00" fill="#ffffff"/><rect x="2.90" y="11.10" width="1" height="1.00" fill="#8adcf9"/><rect x="5.00" y="11.10" width="1.98" height="1.00" fill="#ffffff"/><rect x="8.00" y="11.10" width="1.98" height="1.00" fill="#ffffff"/><rect x="11.00" y="11.10" width="1.98" height="1.00" fill="#ffffff"/></svg>
<span style="left:86.00px;top:293.00px;height:19px;line-height:19px;font-size:15px;color:#f2f2f2;letter-spacing:-0.338px;">populate_column_hist...</span>
<svg style="left:49px;top:315.5px" width="5" height="9" viewBox="0 0 5 9"><path d="M0 0v8.500L4.500 4.250z" fill="#8c8c8c"/></svg>
<svg style="left:64px;top:312px" width="16" height="16" viewBox="0 0 16 16"><rect x="1" y="1" width="14" height="13" fill="#fafdfd"/><rect x="2" y="2" width="12" height="11" fill="#c4cccc"/><rect x="2" y="2" width="12" height="2.6" fill="#2fb3f0"/><rect x="2" y="2" width="2.7" height="11" fill="#2fb3f0"/><rect x="2.90" y="2.90" width="1" height="1.00" fill="#8adcf9"/><rect x="5.00" y="2.90" width="1.98" height="1.00" fill="#8adcf9"/><rect x="8.00" y="2.90" width="1.98" height="1.00" fill="#8adcf9"/><rect x="11.00" y="2.90" width="1.98" height="1.00" fill="#8adcf9"/><rect x="2.90" y="5.10" width="1" height="1.00" fill="#8adcf9"/><rect x="5.00" y="5.10" width="1.98" height="1.00" fill="#ffffff"/><rect x="8.00" y="5.10" width="1.98" height="1.00" fill="#ffffff"/><rect x="11.00" y="5.10" width="1.98" height="1.00" fill="#ffffff"/><rect x="2.90" y="7.10" width="1" height="1.00" fill="#8adcf9"/><rect x="5.00" y="7.10" width="1.98" height="1.00" fill="#ffffff"/><rect x="8.00" y="7.10" width="1.98" height="1.00" fill="#ffffff"/><rect x="11.00" y="7.10" width="1.98" height="1.00" fill="#ffffff"/><rect x="2.90" y="9.10" width="1" height="1.00" fill="#8adcf9"/><rect x="5.00" y="9.10" width="1.98" height="1.00" fill="#ffffff"/><rect x="8.00" y="9.10" width="1.98" height="1.00" fill="#ffffff"/><rect x="11.00" y="9.10" width="1.98" height="1.00" fill="#ffffff"/><rect x="2.90" y="11.10" width="1" height="1.00" fill="#8adcf9"/><rect x="5.00" y="11.10" width="1.98" height="1.00" fill="#ffffff"/><rect x="8.00" y="11.10" width="1.98" height="1.00" fill="#ffffff"/><rect x="11.00" y="11.10" width="1.98" height="1.00" fill="#ffffff"/></svg>
<span style="left:86.00px;top:311.00px;height:19px;line-height:19px;font-size:15px;color:#f2f2f2;letter-spacing:-0.271px;">populate_history</span>
<svg style="left:49px;top:333.5px" width="5" height="9" viewBox="0 0 5 9"><path d="M0 0v8.500L4.500 4.250z" fill="#8c8c8c"/></svg>
<svg style="left:64px;top:330px" width="16" height="16" viewBox="0 0 16 16"><rect x="1" y="1" width="14" height="13" fill="#fafdfd"/><rect x="2" y="2" width="12" height="11" fill="#c4cccc"/><rect x="2" y="2" width="12" height="2.6" fill="#2fb3f0"/><rect x="2" y="2" width="2.7" height="11" fill="#2fb3f0"/><rect x="2.90" y="2.90" width="1" height="1.00" fill="#8adcf9"/><rect x="5.00" y="2.90" width="1.98" height="1.00" fill="#8adcf9"/><rect x="8.00" y="2.90" width="1.98" height="1.00" fill="#8adcf9"/><rect x="11.00" y="2.90" width="1.98" height="1.00" fill="#8adcf9"/><rect x="2.90" y="5.10" width="1" height="1.00" fill="#8adcf9"/><rect x="5.00" y="5.10" width="1.98" height="1.00" fill="#ffffff"/><rect x="8.00" y="5.10" width="1.98" height="1.00" fill="#ffffff"/><rect x="11.00" y="5.10" width="1.98" height="1.00" fill="#ffffff"/><rect x="2.90" y="7.10" width="1" height="1.00" fill="#8adcf9"/><rect x="5.00" y="7.10" width="1.98" height="1.00" fill="#ffffff"/><rect x="8.00" y="7.10" width="1.98" height="1.00" fill="#ffffff"/><rect x="11.00" y="7.10" width="1.98" height="1.00" fill="#ffffff"/><rect x="2.90" y="9.10" width="1" height="1.00" fill="#8adcf9"/><rect x="5.00" y="9.10" width="1.98" height="1.00" fill="#ffffff"/><rect x="8.00" y="9.10" width="1.98" height="1.00" fill="#ffffff"/><rect x="11.00" y="9.10" width="1.98" height="1.00" fill="#ffffff"/><rect x="2.90" y="11.10" width="1" height="1.00" fill="#8adcf9"/><rect x="5.00" y="11.10" width="1.98" height="1.00" fill="#ffffff"/><rect x="8.00" y="11.10" width="1.98" height="1.00" fill="#ffffff"/><rect x="11.00" y="11.10" width="1.98" height="1.00" fill="#ffffff"/></svg>
<span style="left:86.00px;top:329.00px;height:19px;line-height:19px;font-size:15px;color:#f2f2f2;letter-spacing:-0.156px;">reports_history</span>
<svg style="left:49px;top:351.5px" width="5" height="9" viewBox="0 0 5 9"><path d="M0 0v8.500L4.500 4.250z" fill="#8c8c8c"/></svg>
<svg style="left:64px;top:348px" width="16" height="16" viewBox="0 0 16 16"><rect x="1" y="1" width="14" height="13" fill="#fafdfd"/><rect x="2" y="2" width="12" height="11" fill="#c4cccc"/><rect x="2" y="2" width="12" height="2.6" fill="#2fb3f0"/><rect x="2" y="2" width="2.7" height="11" fill="#2fb3f0"/><rect x="2.90" y="2.90" width="1" height="1.00" fill="#8adcf9"/><rect x="5.00" y="2.90" width="1.98" height="1.00" fill="#8adcf9"/><rect x="8.00" y="2.90" width="1.98" height="1.00" fill="#8adcf9"/><rect x="11.00" y="2.90" width="1.98" height="1.00" fill="#8adcf9"/><rect x="2.90" y="5.10" width="1" height="1.00" fill="#8adcf9"/><rect x="5.00" y="5.10" width="1.98" height="1.00" fill="#ffffff"/><rect x="8.00" y="5.10" width="1.98" height="1.00" fill="#ffffff"/><rect x="11.00" y="5.10" width="1.98" height="1.00" fill="#ffffff"/><rect x="2.90" y="7.10" width="1" height="1.00" fill="#8adcf9"/><rect x="5.00" y="7.10" width="1.98" height="1.00" fill="#ffffff"/><rect x="8.00" y="7.10" width="1.98" height="1.00" fill="#ffffff"/><rect x="11.00" y="7.10" width="1.98" height="1.00" fill="#ffffff"/><rect x="2.90" y="9.10" width="1" height="1.00" fill="#8adcf9"/><rect x="5.00" y="9.10" width="1.98" height="1.00" fill="#ffffff"/><rect x="8.00" y="9.10" width="1.98" height="1.00" fill="#ffffff"/><rect x="11.00" y="9.10" width="1.98" height="1.00" fill="#ffffff"/><rect x="2.90" y="11.10" width="1" height="1.00" fill="#8adcf9"/><rect x="5.00" y="11.10" width="1.98" height="1.00" fill="#ffffff"/><rect x="8.00" y="11.10" width="1.98" height="1.00" fill="#ffffff"/><rect x="11.00" y="11.10" width="1.98" height="1.00" fill="#ffffff"/></svg>
<span style="left:86.00px;top:347.00px;height:19px;line-height:19px;font-size:15px;color:#f2f2f2;letter-spacing:-0.241px;">settings</span>
<svg style="left:49px;top:369.5px" width="5" height="9" viewBox="0 0 5 9"><path d="M0 0v8.500L4.500 4.250z" fill="#e8e8e8"/></svg>
<svg style="left:64px;top:366px" width="16" height="16" viewBox="0 0 16 16"><g opacity=".9"><rect x="1" y="1" width="14" height="13" fill="#fafdfd"/><rect x="2" y="2" width="12" height="11" fill="#c4cccc"/><rect x="2" y="2" width="12" height="2.6" fill="#2fb3f0"/><rect x="2" y="2" width="2.7" height="11" fill="#2fb3f0"/><rect x="2.90" y="2.90" width="1" height="1.00" fill="#8adcf9"/><rect x="5.00" y="2.90" width="1.98" height="1.00" fill="#8adcf9"/><rect x="8.00" y="2.90" width="1.98" height="1.00" fill="#8adcf9"/><rect x="11.00" y="2.90" width="1.98" height="1.00" fill="#8adcf9"/><rect x="2.90" y="5.10" width="1" height="1.00" fill="#8adcf9"/><rect x="5.00" y="5.10" width="1.98" height="1.00" fill="#ffffff"/><rect x="8.00" y="5.10" width="1.98" height="1.00" fill="#ffffff"/><rect x="11.00" y="5.10" width="1.98" height="1.00" fill="#ffffff"/><rect x="2.90" y="7.10" width="1" height="1.00" fill="#8adcf9"/><rect x="5.00" y="7.10" width="1.98" height="1.00" fill="#ffffff"/><rect x="8.00" y="7.10" width="1.98" height="1.00" fill="#ffffff"/><rect x="11.00" y="7.10" width="1.98" height="1.00" fill="#ffffff"/><rect x="2.90" y="9.10" width="1" height="1.00" fill="#8adcf9"/><rect x="5.00" y="9.10" width="1.98" height="1.00" fill="#ffffff"/><rect x="8.00" y="9.10" width="1.98" height="1.00" fill="#ffffff"/><rect x="11.00" y="9.10" width="1.98" height="1.00" fill="#ffffff"/><rect x="2.90" y="11.10" width="1" height="1.00" fill="#8adcf9"/><rect x="5.00" y="11.10" width="1.98" height="1.00" fill="#ffffff"/><rect x="8.00" y="11.10" width="1.98" height="1.00" fill="#ffffff"/><rect x="11.00" y="11.10" width="1.98" height="1.00" fill="#ffffff"/></g><rect x="0" y="0" width="16" height="16" fill="#2a82da" opacity=".38"/></svg>
<span style="left:86.00px;top:365.00px;height:19px;line-height:19px;font-size:15px;color:#0b0b16;letter-spacing:-0.328px;">sqleditor_history</span>
<svg style="left:49px;top:387.5px" width="5" height="9" viewBox="0 0 5 9"><path d="M0 0v8.500L4.500 4.250z" fill="#8c8c8c"/></svg>
<svg style="left:64px;top:384px" width="16" height="16" viewBox="0 0 16 16"><rect x="1" y="1" width="14" height="13" fill="#fafdfd"/><rect x="2" y="2" width="12" height="11" fill="#c4cccc"/><rect x="2" y="2" width="12" height="2.6" fill="#2fb3f0"/><rect x="2" y="2" width="2.7" height="11" fill="#2fb3f0"/><rect x="2.90" y="2.90" width="1" height="1.00" fill="#8adcf9"/><rect x="5.00" y="2.90" width="1.98" height="1.00" fill="#8adcf9"/><rect x="8.00" y="2.90" width="1.98" height="1.00" fill="#8adcf9"/><rect x="11.00" y="2.90" width="1.98" height="1.00" fill="#8adcf9"/><rect x="2.90" y="5.10" width="1" height="1.00" fill="#8adcf9"/><rect x="5.00" y="5.10" width="1.98" height="1.00" fill="#ffffff"/><rect x="8.00" y="5.10" width="1.98" height="1.00" fill="#ffffff"/><rect x="11.00" y="5.10" width="1.98" height="1.00" fill="#ffffff"/><rect x="2.90" y="7.10" width="1" height="1.00" fill="#8adcf9"/><rect x="5.00" y="7.10" width="1.98" height="1.00" fill="#ffffff"/><rect x="8.00" y="7.10" width="1.98" height="1.00" fill="#ffffff"/><rect x="11.00" y="7.10" width="1.98" height="1.00" fill="#ffffff"/><rect x="2.90" y="9.10" width="1" height="1.00" fill="#8adcf9"/><rect x="5.00" y="9.10" width="1.98" height="1.00" fill="#ffffff"/><rect x="8.00" y="9.10" width="1.98" height="1.00" fill="#ffffff"/><rect x="11.00" y="9.10" width="1.98" height="1.00" fill="#ffffff"/><rect x="2.90" y="11.10" width="1" height="1.00" fill="#8adcf9"/><rect x="5.00" y="11.10" width="1.98" height="1.00" fill="#ffffff"/><rect x="8.00" y="11.10" width="1.98" height="1.00" fill="#ffffff"/><rect x="11.00" y="11.10" width="1.98" height="1.00" fill="#ffffff"/></svg>
<span style="left:86.00px;top:383.00px;height:19px;line-height:19px;font-size:15px;color:#f2f2f2;letter-spacing:-0.396px;">version</span>
<svg style="left:45px;top:402px" width="16" height="16" viewBox="0 0 16 16"><rect x="5" y="1" width="10" height="9" fill="#fafdfd"/><rect x="6" y="2" width="8" height="7" fill="#c4cccc"/><rect x="6" y="2" width="8" height="2.500" fill="#30b4f1"/><rect x="6" y="2" width="2.600" height="7" fill="#30b4f1"/><rect x="6.9" y="3" width="1" height="1" fill="#9adff9"/><rect x="9" y="3" width="2" height="1" fill="#9adff9"/><rect x="12" y="3" width="1.200" height="1" fill="#9adff9"/><rect x="6.9" y="5" width="1" height="1" fill="#9adff9"/><rect x="9" y="5" width="2" height="1" fill="#fff"/><rect x="12" y="5" width="1.200" height="1" fill="#fff"/><rect x="6.9" y="7" width="1" height="1" fill="#9adff9"/><rect x="9" y="7" width="2" height="1" fill="#fff"/><rect x="12" y="7" width="1.200" height="1" fill="#fff"/><rect x="0" y="5" width="10" height="9" fill="#fafdfd"/><rect x="1" y="6" width="8" height="7" fill="#c4cccc"/><rect x="1" y="6" width="8" height="2.500" fill="#30b4f1"/><rect x="1" y="6" width="2.600" height="7" fill="#30b4f1"/><rect x="1.9" y="7" width="1" height="1" fill="#9adff9"/><rect x="4" y="7" width="2" height="1" fill="#9adff9"/><rect x="7" y="7" width="1.200" height="1" fill="#9adff9"/><rect x="1.9" y="9" width="1" height="1" fill="#9adff9"/><rect x="4" y="9" width="2" height="1" fill="#fff"/><rect x="7" y="9" width="1.200" height="1" fill="#fff"/><rect x="1.9" y="11" width="1" height="1" fill="#9adff9"/><rect x="4" y="11" width="2" height="1" fill="#fff"/><rect x="7" y="11" width="1.200" height="1" fill="#fff"/><path d="M4.300 0L7.600 0 5.200 3.300 7.200 3.300 1.300 9.300 3 5 .8 5z" transform="translate(8 1.7)" fill="#f4e04a" stroke="#b09a14" stroke-width=".7" stroke-linejoin="round"/><path d="M4.300 0L7.600 0 5.200 3.300 7.200 3.300 1.300 9.300 3 5 .8 5z" transform="translate(3 5.8)" fill="#f4e04a" stroke="#b09a14" stroke-width=".7" stroke-linejoin="round"/></svg>
<span style="left:66.00px;top:401.00px;height:19px;line-height:19px;font-size:15px;color:#f2f2f2;letter-spacing:-0.938px;">Views</span>
<svg style="left:26px;top:420px" width="12" height="16" viewBox="0 0 12 16"><rect x="0.5" y="1.25" width="10.5" height="4.33" rx="1" fill="url(#gdbd)"/><rect x="0.5" y="1.25" width="10.5" height="1" rx=".5" fill="#fff" opacity=".12"/><rect x="0.5" y="4.58" width="10.5" height="1" rx=".5" fill="#000" opacity=".25"/><rect x="0.5" y="6.08" width="10.5" height="4.33" rx="1" fill="url(#gdbd)"/><rect x="0.5" y="6.08" width="10.5" height="1" rx=".5" fill="#fff" opacity=".12"/><rect x="0.5" y="9.42" width="10.5" height="1" rx=".5" fill="#000" opacity=".25"/><rect x="0.5" y="10.92" width="10.5" height="4.33" rx="1" fill="url(#gdbd)"/><rect x="0.5" y="10.92" width="10.5" height="1" rx=".5" fill="#fff" opacity=".12"/><rect x="0.5" y="14.25" width="10.5" height="1" rx=".5" fill="#000" opacity=".25"/></svg>
<span style="left:46.00px;top:419.00px;height:19px;line-height:19px;font-size:15px;color:#f2f2f2;letter-spacing:-0.896px;">sqlc</span>
<span style="left:76.00px;top:420.75px;height:13.5px;line-height:13.5px;font-size:9.5px;color:#2a80d6;letter-spacing:-0.531px;">(SQLCipher)</span>
<svg style="left:26px;top:438px" width="12" height="16" viewBox="0 0 12 16"><rect x="0.5" y="1.25" width="10.5" height="4.33" rx="1" fill="url(#gdbd)"/><rect x="0.5" y="1.25" width="10.5" height="1" rx=".5" fill="#fff" opacity=".12"/><rect x="0.5" y="4.58" width="10.5" height="1" rx=".5" fill="#000" opacity=".25"/><rect x="0.5" y="6.08" width="10.5" height="4.33" rx="1" fill="url(#gdbd)"/><rect x="0.5" y="6.08" width="10.5" height="1" rx=".5" fill="#fff" opacity=".12"/><rect x="0.5" y="9.42" width="10.5" height="1" rx=".5" fill="#000" opacity=".25"/><rect x="0.5" y="10.92" width="10.5" height="4.33" rx="1" fill="url(#gdbd)"/><rect x="0.5" y="10.92" width="10.5" height="1" rx=".5" fill="#fff" opacity=".12"/><rect x="0.5" y="14.25" width="10.5" height="1" rx=".5" fill="#000" opacity=".25"/></svg>
<span style="left:46.06px;top:437.00px;height:19px;line-height:19px;font-size:15px;color:#f2f2f2;letter-spacing:-0.375px;">wx</span>
<span style="left:70.00px;top:438.75px;height:13.5px;line-height:13.5px;font-size:9.5px;color:#2a80d6;letter-spacing:-0.537px;">(WxSQLite3)</span>
<svg style="left:26px;top:456px" width="12" height="16" viewBox="0 0 12 16"><rect x="0.5" y="1.25" width="10.5" height="4.33" rx="1" fill="url(#gdbd)"/><rect x="0.5" y="1.25" width="10.5" height="1" rx=".5" fill="#fff" opacity=".12"/><rect x="0.5" y="4.58" width="10.5" height="1" rx=".5" fill="#000" opacity=".25"/><rect x="0.5" y="6.08" width="10.5" height="4.33" rx="1" fill="url(#gdbd)"/><rect x="0.5" y="6.08" width="10.5" height="1" rx=".5" fill="#fff" opacity=".12"/><rect x="0.5" y="9.42" width="10.5" height="1" rx=".5" fill="#000" opacity=".25"/><rect x="0.5" y="10.92" width="10.5" height="4.33" rx="1" fill="url(#gdbd)"/><rect x="0.5" y="10.92" width="10.5" height="1" rx=".5" fill="#fff" opacity=".12"/><rect x="0.5" y="14.25" width="10.5" height="1" rx=".5" fill="#000" opacity=".25"/></svg>
<svg style="left:31px;top:462px" width="10" height="10" viewBox="0 0 10 10"><path d="M5 .8L9.600 9.200H.4z" fill="#f6d12c" stroke="#a8860c" stroke-width=".5"/><path d="M5 3.500v3" stroke="#222" stroke-width="1.100"/><circle cx="5" cy="7.800" r=".6" fill="#222"/></svg>
<span style="left:46.00px;top:455.00px;height:19px;line-height:19px;font-size:15px;color:#f2f2f2;letter-spacing:-0.500px;">sys</span>
<span style="left:74.00px;top:456.75px;height:13.5px;line-height:13.5px;font-size:9.5px;color:#2a80d6;letter-spacing:-0.229px;">(error)</span>
<svg style="left:26px;top:474px" width="12" height="16" viewBox="0 0 12 16"><rect x="0.5" y="1.25" width="10.5" height="4.33" rx="1" fill="url(#gdbd)"/><rect x="0.5" y="1.25" width="10.5" height="1" rx=".5" fill="#fff" opacity=".12"/><rect x="0.5" y="4.58" width="10.5" height="1" rx=".5" fill="#000" opacity=".25"/><rect x="0.5" y="6.08" width="10.5" height="4.33" rx="1" fill="url(#gdbd)"/><rect x="0.5" y="6.08" width="10.5" height="1" rx=".5" fill="#fff" opacity=".12"/><rect x="0.5" y="9.42" width="10.5" height="1" rx=".5" fill="#000" opacity=".25"/><rect x="0.5" y="10.92" width="10.5" height="4.33" rx="1" fill="url(#gdbd)"/><rect x="0.5" y="10.92" width="10.5" height="1" rx=".5" fill="#fff" opacity=".12"/><rect x="0.5" y="14.25" width="10.5" height="1" rx=".5" fill="#000" opacity=".25"/></svg>
<span style="left:46.00px;top:473.00px;height:19px;line-height:19px;font-size:15px;color:#f2f2f2;letter-spacing:-0.738px;">slowdb</span>
<span style="left:95.00px;top:474.75px;height:13.5px;line-height:13.5px;font-size:9.5px;color:#2a80d6;letter-spacing:-0.539px;word-spacing:0.539px;">(SQLite 3)</span>
<div style="left:246px;top:396px;width:2px;height:2px;background:#5a5a5a;"></div>
<div style="left:246px;top:399px;width:2px;height:2px;background:#5a5a5a;"></div>
<div style="left:246px;top:402px;width:2px;height:2px;background:#5a5a5a;"></div>
<div style="left:246px;top:405px;width:2px;height:2px;background:#5a5a5a;"></div>
<div style="left:246px;top:408px;width:2px;height:2px;background:#5a5a5a;"></div>
<div style="left:246px;top:411px;width:2px;height:2px;background:#5a5a5a;"></div>
<div style="left:318px;top:94px;width:296px;height:19px;background:#2a2a2a;"></div>
<div style="left:319px;top:92px;width:46px;height:20px;background:#474747;box-sizing:border-box;border:1px solid #5c5c5c;border-bottom:none;border-radius:3px 3px 0 0;"></div>
<span style="left:329.30px;top:95.00px;height:16px;line-height:16px;font-size:12px;color:#f2f2f2;letter-spacing:-0.725px;">Data</span>
<div style="left:366px;top:92px;width:78px;height:20px;background:#474747;box-sizing:border-box;border:1px solid #5c5c5c;border-bottom:none;border-radius:3px 3px 0 0;"></div>
<span style="left:376.50px;top:95.00px;height:16px;line-height:16px;font-size:12px;color:#f2f2f2;letter-spacing:-0.569px;">Constraints</span>
<div style="left:445px;top:92px;width:62px;height:20px;background:#474747;box-sizing:border-box;border:1px solid #5c5c5c;border-bottom:none;border-radius:3px 3px 0 0;"></div>
<span style="left:455.40px;top:95.00px;height:16px;line-height:16px;font-size:12px;color:#f2f2f2;letter-spacing:-0.483px;">Indexes</span>
<div style="left:508px;top:92px;width:62px;height:20px;background:#474747;box-sizing:border-box;border:1px solid #5c5c5c;border-bottom:none;border-radius:3px 3px 0 0;"></div>
<span style="left:518.30px;top:95.00px;height:16px;line-height:16px;font-size:12px;color:#f2f2f2;letter-spacing:-0.609px;">Triggers</span>
<div style="left:571px;top:92px;width:42px;height:20px;background:#474747;box-sizing:border-box;border:1px solid #5c5c5c;border-bottom:none;border-radius:3px 3px 0 0;"></div>
<span style="left:581.00px;top:95.00px;height:16px;line-height:16px;font-size:12px;color:#f2f2f2;letter-spacing:-1.200px;">DDL</span>
<div style="left:250px;top:90px;width:68px;height:24px;background:#505050;box-sizing:border-box;border:1px solid #646464;border-bottom:none;border-radius:3px 3px 0 0;"></div>
<span style="left:260.50px;top:94.00px;height:16px;line-height:16px;font-size:12px;color:#f2f2f2;letter-spacing:-0.523px;">Structure</span>
<svg style="left:263px;top:125px" width="16" height="16" viewBox="0 0 16 16"><rect x="1.300" y="1.300" width="13.500" height="13.500" rx="2.500" fill="url(#gblue)" stroke="#1a2aa0" stroke-width=".6"/><path d="M3.6 7.4a4.4 4.4 0 0 1 7.6-2.2l1.2-1.2v3.6h-3.6l1.2-1.2a2.8 2.8 0 0 0-4.6 1z" fill="#fff"/><path d="M12.4 8.8a4.4 4.4 0 0 1-7.6 2.2l-1.2 1.2v-3.6h3.6l-1.2 1.2a2.8 2.8 0 0 0 4.6-1z" fill="#fff"/></svg>
<div style="left:291px;top:124px;width:2px;height:19px;background:#333;"></div>
<svg style="left:303px;top:125px" width="16" height="16" viewBox="0 0 16 16"><rect x="1.800" y="1.700" width="12.400" height="12.200" rx="2" fill="url(#ggray)"/><path d="M4 7.700l2.800 2.800L12 4.700" fill="none" stroke="#c9c9c9" stroke-width="2"/></svg>
<svg style="left:336px;top:125px" width="16" height="16" viewBox="0 0 16 16"><rect x="1.800" y="1.700" width="12.400" height="12.200" rx="2" fill="url(#ggray)"/><path d="M4.800 4.400l6.400 6.400M11.200 4.400l-6.400 6.400" fill="none" stroke="#d0d0d0" stroke-width="2.2"/></svg>
<svg style="left:369px;top:125px" width="16" height="16" viewBox="0 0 16 16"><g transform="translate(-1 0)"><rect x="1.4" y="1.5" width="14" height="13.5" fill="#fafdfd"/><rect x="2.4" y="2.5" width="12" height="11.5" fill="#c4cccc"/><rect x="2.4" y="2.5" width="12" height="2.6" fill="#2fb3f0"/><rect x="2.4" y="2.5" width="2.7" height="11.5" fill="#2fb3f0"/><rect x="3.30" y="3.27" width="1" height="1.06" fill="#8adcf9"/><rect x="5.40" y="3.27" width="1.98" height="1.06" fill="#8adcf9"/><rect x="8.40" y="3.27" width="1.98" height="1.06" fill="#8adcf9"/><rect x="11.40" y="3.27" width="1.98" height="1.06" fill="#8adcf9"/><rect x="3.30" y="5.60" width="1" height="1.06" fill="#8adcf9"/><rect x="5.40" y="5.60" width="1.98" height="1.06" fill="#ffffff"/><rect x="8.40" y="5.60" width="1.98" height="1.06" fill="#ffffff"/><rect x="11.40" y="5.60" width="1.98" height="1.06" fill="#ffffff"/><rect x="3.30" y="7.72" width="1" height="1.06" fill="#8adcf9"/><rect x="5.40" y="7.72" width="1.98" height="1.06" fill="#ffffff"/><rect x="8.40" y="7.72" width="1.98" height="1.06" fill="#ffffff"/><rect x="11.40" y="7.72" width="1.98" height="1.06" fill="#ffffff"/><rect x="3.30" y="9.85" width="1" height="1.06" fill="#8adcf9"/><rect x="5.40" y="9.85" width="1.98" height="1.06" fill="#ffffff"/><rect x="8.40" y="9.85" width="1.98" height="1.06" fill="#ffffff"/><rect x="11.40" y="9.85" width="1.98" height="1.06" fill="#ffffff"/><rect x="3.30" y="11.97" width="1" height="1.06" fill="#8adcf9"/><rect x="5.40" y="11.97" width="1.98" height="1.06" fill="#ffffff"/><rect x="8.40" y="11.97" width="1.98" height="1.06" fill="#ffffff"/><rect x="11.40" y="11.97" width="1.98" height="1.06" fill="#ffffff"/><rect x="4.400" y="4.200" width="3.600" height="9.800" fill="#5cc4f2" opacity=".55"/><rect x="8" y="2.700" width="3.100" height="11.300" fill="#1fbf1f" stroke="#0a8a0a" stroke-width=".6"/><rect x="9.100" y="3.500" width=".9" height="10" fill="#86e886"/><rect x="8.600" y="1" width="1.900" height="1.600" fill="#1fb01f"/></g></svg>
<svg style="left:402px;top:125px" width="16" height="16" viewBox="0 0 16 16"><g transform="translate(-1 0)"><rect x="1.8" y="1.5" width="14.4" height="13.5" fill="#dcdcdc"/><rect x="2.8" y="2.5" width="12.4" height="11.5" fill="#b4b4b4"/><rect x="2.8" y="2.5" width="12.4" height="2.6" fill="#a0a0a0"/><rect x="2.8" y="2.5" width="2.7" height="11.5" fill="#a0a0a0"/><rect x="3.70" y="3.27" width="1" height="1.06" fill="#c6c6c6"/><rect x="5.80" y="3.27" width="2.07" height="1.06" fill="#c6c6c6"/><rect x="8.93" y="3.27" width="2.07" height="1.06" fill="#c6c6c6"/><rect x="12.07" y="3.27" width="2.07" height="1.06" fill="#c6c6c6"/><rect x="3.70" y="5.60" width="1" height="1.06" fill="#c6c6c6"/><rect x="5.80" y="5.60" width="2.07" height="1.06" fill="#e2e2e2"/><rect x="8.93" y="5.60" width="2.07" height="1.06" fill="#e2e2e2"/><rect x="12.07" y="5.60" width="2.07" height="1.06" fill="#e2e2e2"/><rect x="3.70" y="7.72" width="1" height="1.06" fill="#c6c6c6"/><rect x="5.80" y="7.72" width="2.07" height="1.06" fill="#e2e2e2"/><rect x="8.93" y="7.72" width="2.07" height="1.06" fill="#e2e2e2"/><rect x="12.07" y="7.72" width="2.07" height="1.06" fill="#e2e2e2"/><rect x="3.70" y="9.85" width="1" height="1.06" fill="#c6c6c6"/><rect x="5.80" y="9.85" width="2.07" height="1.06" fill="#e2e2e2"/><rect x="8.93" y="9.85" width="2.07" height="1.06" fill="#e2e2e2"/><rect x="12.07" y="9.85" width="2.07" height="1.06" fill="#e2e2e2"/><rect x="3.70" y="11.97" width="1" height="1.06" fill="#c6c6c6"/><rect x="5.80" y="11.97" width="2.07" height="1.06" fill="#e2e2e2"/><rect x="8.93" y="11.97" width="2.07" height="1.06" fill="#e2e2e2"/><rect x="12.07" y="11.97" width="2.07" height="1.06" fill="#e2e2e2"/><rect x="7.600" y="2.500" width="2" height="11.500" fill="#7e7e7e"/><path d="M9.800 14.600l.8-2.600 5.200-5.400 1.200 1.200-5.200 5.400z" fill="#d4d4d4" stroke="#6a6a6a" stroke-width=".6"/></g></svg>
<svg style="left:435px;top:125px" width="16" height="16" viewBox="0 0 16 16"><g transform="translate(-1 0)"><rect x="1.8" y="1.5" width="13.2" height="13.5" fill="#dcdcdc"/><rect x="2.8" y="2.5" width="11.2" height="11.5" fill="#b4b4b4"/><rect x="2.8" y="2.5" width="11.2" height="2.6" fill="#a0a0a0"/><rect x="2.8" y="2.5" width="2.7" height="11.5" fill="#a0a0a0"/><rect x="3.70" y="3.27" width="1" height="1.06" fill="#c6c6c6"/><rect x="5.80" y="3.27" width="1.80" height="1.06" fill="#c6c6c6"/><rect x="8.53" y="3.27" width="1.80" height="1.06" fill="#c6c6c6"/><rect x="11.27" y="3.27" width="1.80" height="1.06" fill="#c6c6c6"/><rect x="3.70" y="5.60" width="1" height="1.06" fill="#c6c6c6"/><rect x="5.80" y="5.60" width="1.80" height="1.06" fill="#e2e2e2"/><rect x="8.53" y="5.60" width="1.80" height="1.06" fill="#e2e2e2"/><rect x="11.27" y="5.60" width="1.80" height="1.06" fill="#e2e2e2"/><rect x="3.70" y="7.72" width="1" height="1.06" fill="#c6c6c6"/><rect x="5.80" y="7.72" width="1.80" height="1.06" fill="#e2e2e2"/><rect x="8.53" y="7.72" width="1.80" height="1.06" fill="#e2e2e2"/><rect x="11.27" y="7.72" width="1.80" height="1.06" fill="#e2e2e2"/><rect x="3.70" y="9.85" width="1" height="1.06" fill="#c6c6c6"/><rect x="5.80" y="9.85" width="1.80" height="1.06" fill="#e2e2e2"/><rect x="8.53" y="9.85" width="1.80" height="1.06" fill="#e2e2e2"/><rect x="11.27" y="9.85" width="1.80" height="1.06" fill="#e2e2e2"/><rect x="3.70" y="11.97" width="1" height="1.06" fill="#c6c6c6"/><rect x="5.80" y="11.97" width="1.80" height="1.06" fill="#e2e2e2"/><rect x="8.53" y="11.97" width="1.80" height="1.06" fill="#e2e2e2"/><rect x="11.27" y="11.97" width="1.80" height="1.06" fill="#e2e2e2"/><rect x="8.400" y="3.500" width="2" height="12.300" fill="#8c8c8c" stroke="#e4e4e4" stroke-width=".6"/><path d="M7.700 2.500h3.400L9.400 4.600z" fill="#4a4a4a"/></g></svg>
<svg style="left:468px;top:125px" width="16" height="16" viewBox="0 0 16 16"><rect x="1.800" y="1.700" width="12.400" height="12.200" rx="2" fill="url(#ggray)"/><path d="M8 11.200V4.200M4.600 7.400L8 4l3.400 3.400" fill="none" stroke="#e4e4e4" stroke-width="2"/></svg>
<svg style="left:501px;top:125px" width="16" height="16" viewBox="0 0 16 16"><rect x="1.800" y="1.700" width="12.400" height="12.200" rx="2" fill="url(#ggray)"/><path d="M8 3.700v7M4.600 7.500L8 10.900l3.400-3.400" fill="none" stroke="#e4e4e4" stroke-width="2"/></svg>
<div style="left:529px;top:124px;width:2px;height:19px;background:#333;"></div>
<svg style="left:542px;top:125px" width="16" height="16" viewBox="0 0 16 16"><g transform="rotate(-45 8 8)"><path d="M-1.500 5.700h15.500l2.300 2.300-2.300 2.300h-15.500z" fill="#2f8fe8" stroke="#f4f8fc" stroke-width=".9"/><path d="M13 5.700h1l2.300 2.300-2.300 2.300h-1z" fill="#fff"/></g><circle cx="11.8" cy="12" r="3.6" fill="url(#ggreen)" stroke="#0a6e0a" stroke-width=".5"/><path d="M9.600000000000001 12H14.0M11.8 9.8V14.2" stroke="#fff" stroke-width="1.4"/></svg>
<svg style="left:575px;top:125px" width="16" height="16" viewBox="0 0 16 16"><g fill="#cfcfcf"><rect x="6.6" y=".8" width="2.8" height="4" transform="rotate(0 8 8)"/><rect x="6.6" y=".8" width="2.8" height="4" transform="rotate(45 8 8)"/><rect x="6.6" y=".8" width="2.8" height="4" transform="rotate(90 8 8)"/><rect x="6.6" y=".8" width="2.8" height="4" transform="rotate(135 8 8)"/><rect x="6.6" y=".8" width="2.8" height="4" transform="rotate(180 8 8)"/><rect x="6.6" y=".8" width="2.8" height="4" transform="rotate(225 8 8)"/><rect x="6.6" y=".8" width="2.8" height="4" transform="rotate(270 8 8)"/><rect x="6.6" y=".8" width="2.8" height="4" transform="rotate(315 8 8)"/></g><circle cx="8" cy="8" r="4.6" fill="#cfcfcf"/><circle cx="8" cy="8" r="2" fill="#505050"/><circle cx="12" cy="12" r="3.6" fill="url(#ggreen)" stroke="#0a6e0a" stroke-width=".5"/><path d="M9.8 12H14.2M12 9.8V14.2" stroke="#fff" stroke-width="1.4"/></svg>
<div style="left:602px;top:124px;width:2px;height:19px;background:#333;"></div>
<svg style="left:614px;top:125px" width="16" height="16" viewBox="0 0 16 16"><rect x="4.300" y="4.800" width="7.400" height="7" fill="#f6f6f6"/><path d="M4.300 7.200h7.400M4.300 9.500h7.400M8 4.800v7" stroke="#b8b8b8" stroke-width=".7"/><g transform="translate(8 8) scale(1 1) translate(-7.800 -7.800)"><path d="M.4 .4L4.500 4.500" stroke="#1f98f0" stroke-width="1.500"/><path d="M6.400 6.400V2.200L2.200 6.400z" fill="#1f98f0"/></g><g transform="translate(8 8) scale(-1 1) translate(-7.800 -7.800)"><path d="M.4 .4L4.500 4.500" stroke="#1f98f0" stroke-width="1.500"/><path d="M6.400 6.400V2.200L2.200 6.400z" fill="#1f98f0"/></g><g transform="translate(8 8) scale(1 -1) translate(-7.800 -7.800)"><path d="M.4 .4L4.500 4.500" stroke="#1f98f0" stroke-width="1.500"/><path d="M6.400 6.400V2.200L2.200 6.400z" fill="#1f98f0"/></g><g transform="translate(8 8) scale(-1 -1) translate(-7.800 -7.800)"><path d="M.4 .4L4.500 4.500" stroke="#1f98f0" stroke-width="1.500"/><path d="M6.400 6.400V2.200L2.200 6.400z" fill="#1f98f0"/></g></svg>
<svg style="left:647px;top:125px" width="16" height="16" viewBox="0 0 16 16"><rect x="3.500" y="3.500" width="9" height="9" fill="#f4f6f8" stroke="#2a8ce4" stroke-width="1"/><path d="M4 6.500h8M4 9.500h8M8 4v8" stroke="#b4c4d4" stroke-width=".7"/><g transform="translate(8 8) scale(1 1) translate(-7.800 -7.800)"><path d="M6.400 6.400L2.500 2.500" stroke="#1f98f0" stroke-width="1.500"/><path d="M.2 .2H4.800L.2 4.800z" fill="#1f98f0"/></g><g transform="translate(8 8) scale(-1 1) translate(-7.800 -7.800)"><path d="M6.400 6.400L2.500 2.500" stroke="#1f98f0" stroke-width="1.500"/><path d="M.2 .2H4.800L.2 4.800z" fill="#1f98f0"/></g><g transform="translate(8 8) scale(1 -1) translate(-7.800 -7.800)"><path d="M6.400 6.400L2.500 2.500" stroke="#1f98f0" stroke-width="1.500"/><path d="M.2 .2H4.800L.2 4.800z" fill="#1f98f0"/></g><g transform="translate(8 8) scale(-1 -1) translate(-7.800 -7.800)"><path d="M6.400 6.400L2.500 2.500" stroke="#1f98f0" stroke-width="1.500"/><path d="M.2 .2H4.800L.2 4.800z" fill="#1f98f0"/></g></svg>
<svg style="left:680px;top:125px" width="16" height="16" viewBox="0 0 16 16"><rect x="2" y="1" width="13.200" height="13.600" fill="#e4e6ee" stroke="#fafcfc" stroke-width="1"/><rect x="9" y="7.500" width="5.200" height="6" fill="#b9c0ec"/><path d="M3.500 12.500h5" stroke="#c9cce0" stroke-width="1"/><path d="M7 3.500c4.200 0 5.600 3.200 4.300 7.500l-2.200-.6c.9-2.600-.2-4.600-2.600-4.800z" fill="#1d3fbc"/><path d="M2.500 1l2 .3 .4 2 1.500 .4 1.300 2.500-.8 3.300-2.400 1.500-2.500-1-1.200-3.500 .7-3z" fill="#dedede" stroke="#8c8c8c" stroke-width=".6" stroke-linejoin="round"/><path d="M3.300 2v3M4.800 3.500v2.500" stroke="#9a9a9a" stroke-width=".5"/></svg>
<div style="left:708px;top:124px;width:2px;height:19px;background:#333;"></div>
<svg style="left:720px;top:125px" width="16" height="16" viewBox="0 0 16 16"><rect x="4.7" y="0.6" width="11" height="9" fill="#f6fafc"/><path d="M5.7 2.1h9.500v6.500" fill="none" stroke="#2a98e2" stroke-width="1"/><rect x="2.7" y="2.8" width="11" height="9" fill="#f6fafc"/><path d="M3.7 4.3h9.500v6.500" fill="none" stroke="#2a98e2" stroke-width="1"/><g transform="translate(.3 5) scale(1.150 1)"><rect x="0" y="0" width="10" height="9" fill="#fafdfd"/><rect x="1" y="1" width="8" height="7" fill="#c4cccc"/><rect x="1" y="1" width="8" height="2.500" fill="#30b4f1"/><rect x="1" y="1" width="2.600" height="7" fill="#30b4f1"/><rect x="1.9" y="2" width="1" height="1" fill="#9adff9"/><rect x="4" y="2" width="2" height="1" fill="#9adff9"/><rect x="7" y="2" width="1.200" height="1" fill="#9adff9"/><rect x="1.9" y="4" width="1" height="1" fill="#9adff9"/><rect x="4" y="4" width="2" height="1" fill="#fff"/><rect x="7" y="4" width="1.200" height="1" fill="#fff"/><rect x="1.9" y="6" width="1" height="1" fill="#9adff9"/><rect x="4" y="6" width="2" height="1" fill="#fff"/><rect x="7" y="6" width="1.200" height="1" fill="#fff"/></g></svg>
<svg style="left:753px;top:125px" width="16" height="16" viewBox="0 0 16 16"><path d="M6.500 .6L1 5l5.500 4.400V6.600h4.400a2.600 2.600 0 0 1 0 5.200H2.800v2.800h8.100a5.400 5.400 0 0 0 0-10.800H6.500z" fill="url(#gundo)" stroke="#1a7ad0" stroke-width=".5" stroke-linejoin="round"/></svg>
<div style="left:255px;top:153px;width:99px;height:22px;background:#4c4c4c;box-sizing:border-box;border:1px solid #3a3a3a;border-radius:3px;"></div>
<span style="left:259.00px;top:157.30px;height:16px;line-height:16px;font-size:12px;color:#858585;letter-spacing:-0.375px;">settings3</span>
<svg style="left:339px;top:162px" width="9" height="5" viewBox="0 0 9 5"><path d="M0 0h8L4 4.500z" fill="#6e6e6e"/></svg>
<span style="left:361.00px;top:157.20px;height:16px;line-height:16px;font-size:12px;color:#f2f2f2;letter-spacing:-0.819px;word-spacing:0.819px;">Table name:</span>
<div style="left:426px;top:153px;width:200px;height:22px;background:#191919;border-radius:3px;"></div>
<span style="left:428.50px;top:157.50px;height:16px;line-height:16px;font-size:12px;color:#e2e2e2;letter-spacing:-0.461px;">sqleditor_history</span>
<div style="left:632px;top:156px;width:14px;height:14px;background:#191919;box-sizing:border-box;border:1px solid #2c2c2c;"></div>
<span style="left:650.70px;top:157.05px;height:15.5px;line-height:15.5px;font-size:11.5px;color:#f2f2f2;letter-spacing:-0.905px;word-spacing:0.905px;">WITHOUT ROWID</span>
<div style="left:251px;top:177px;width:915px;height:181px;background:#2a2a2a;"></div>
<div style="left:252px;top:178px;width:913px;height:1px;background:#6a6a6a;"></div>
<div style="left:252px;top:179px;width:913px;height:34px;background:#505050;"></div>
<div style="left:332px;top:180px;width:1px;height:32px;background:#474747;"></div>
<div style="left:333px;top:179px;width:1px;height:33px;background:#6c6c6c;"></div>
<div style="left:405px;top:180px;width:1px;height:32px;background:#474747;"></div>
<div style="left:406px;top:179px;width:1px;height:33px;background:#6c6c6c;"></div>
<div style="left:463px;top:180px;width:1px;height:32px;background:#474747;"></div>
<div style="left:464px;top:179px;width:1px;height:33px;background:#6c6c6c;"></div>
<div style="left:518px;top:180px;width:1px;height:32px;background:#474747;"></div>
<div style="left:519px;top:179px;width:1px;height:33px;background:#6c6c6c;"></div>
<div style="left:569px;top:180px;width:1px;height:32px;background:#474747;"></div>
<div style="left:570px;top:179px;width:1px;height:33px;background:#6c6c6c;"></div>
<div style="left:615px;top:180px;width:1px;height:32px;background:#474747;"></div>
<div style="left:616px;top:179px;width:1px;height:33px;background:#6c6c6c;"></div>
<div style="left:655px;top:180px;width:1px;height:32px;background:#474747;"></div>
<div style="left:656px;top:179px;width:1px;height:33px;background:#6c6c6c;"></div>
<div style="left:707px;top:180px;width:1px;height:32px;background:#474747;"></div>
<div style="left:708px;top:179px;width:1px;height:33px;background:#6c6c6c;"></div>
<div style="left:783px;top:180px;width:1px;height:32px;background:#474747;"></div>
<div style="left:784px;top:179px;width:1px;height:33px;background:#6c6c6c;"></div>
<span style="left:282.00px;top:188.50px;height:16px;line-height:16px;font-size:12px;color:#f2f2f2;letter-spacing:0.333px;">Name</span>
<span style="left:343.00px;top:188.50px;height:16px;line-height:16px;font-size:12px;color:#f2f2f2;letter-spacing:0.375px;word-spacing:-0.375px;">Data type</span>
<span style="left:414.00px;top:181.00px;height:16px;line-height:16px;font-size:12px;color:#f2f2f2;letter-spacing:0.448px;">Primary</span>
<span style="left:426.00px;top:196.00px;height:16px;line-height:16px;font-size:12px;color:#f2f2f2;letter-spacing:-0.344px;">Key</span>
<span style="left:471.00px;top:181.00px;height:16px;line-height:16px;font-size:12px;color:#f2f2f2;letter-spacing:0.385px;">Foreign</span>
<span style="left:482.00px;top:196.00px;height:16px;line-height:16px;font-size:12px;color:#f2f2f2;letter-spacing:-0.344px;">Key</span>
<span style="left:526.00px;top:188.50px;height:16px;line-height:16px;font-size:12px;color:#f2f2f2;letter-spacing:0.200px;">Unique</span>
<span style="left:577.50px;top:188.50px;height:16px;line-height:16px;font-size:12px;color:#f2f2f2;letter-spacing:-0.141px;">Check</span>
<span style="left:626.50px;top:181.00px;height:16px;line-height:16px;font-size:12px;color:#f2f2f2;letter-spacing:0.906px;">Not</span>
<span style="left:623.50px;top:196.00px;height:16px;line-height:16px;font-size:12px;color:#f2f2f2;letter-spacing:-1.200px;">NULL</span>
<span style="left:663.00px;top:188.50px;height:16px;line-height:16px;font-size:12px;color:#f2f2f2;letter-spacing:0.188px;">Collate</span>
<span style="left:717.00px;top:188.50px;height:16px;line-height:16px;font-size:12px;color:#f2f2f2;letter-spacing:0.227px;">Generated</span>
<span style="left:938.00px;top:188.50px;height:16px;line-height:16px;font-size:12px;color:#f2f2f2;letter-spacing:0.358px;word-spacing:-0.358px;">Default value</span>
<div style="left:263px;top:214px;width:901px;height:24px;background:#191919;"></div>
<div style="left:252px;top:214px;width:11px;height:23px;background:#505050;box-sizing:border-box;border-top:1px solid #5c5c5c;"></div>
<div style="left:333px;top:214px;width:1px;height:24px;background:#2d2d2d;"></div>
<div style="left:406px;top:214px;width:1px;height:24px;background:#2d2d2d;"></div>
<div style="left:464px;top:214px;width:1px;height:24px;background:#2d2d2d;"></div>
<div style="left:519px;top:214px;width:1px;height:24px;background:#2d2d2d;"></div>
<div style="left:570px;top:214px;width:1px;height:24px;background:#2d2d2d;"></div>
<div style="left:616px;top:214px;width:1px;height:24px;background:#2d2d2d;"></div>
<div style="left:656px;top:214px;width:1px;height:24px;background:#2d2d2d;"></div>
<div style="left:708px;top:214px;width:1px;height:24px;background:#2d2d2d;"></div>
<div style="left:784px;top:214px;width:1px;height:24px;background:#2d2d2d;"></div>
<div style="left:263px;top:237px;width:901px;height:1px;background:#2d2d2d;"></div>
<span style="left:254.00px;top:218.50px;height:16px;line-height:16px;font-size:12px;color:#f2f2f2;letter-spacing:0.000px;">1</span>
<span style="left:267.00px;top:218.00px;height:16px;line-height:16px;font-size:12px;color:#d2d2d2;letter-spacing:0.188px;">id</span>
<span style="left:337.00px;top:218.00px;height:16px;line-height:16px;font-size:12px;color:#d2d2d2;letter-spacing:-0.469px;">INTEGER</span>
<div style="left:263px;top:238px;width:901px;height:24px;background:#353535;"></div>
<div style="left:252px;top:238px;width:11px;height:23px;background:#505050;box-sizing:border-box;border-top:1px solid #5c5c5c;"></div>
<div style="left:333px;top:238px;width:1px;height:24px;background:#2d2d2d;"></div>
<div style="left:406px;top:238px;width:1px;height:24px;background:#2d2d2d;"></div>
<div style="left:464px;top:238px;width:1px;height:24px;background:#2d2d2d;"></div>
<div style="left:519px;top:238px;width:1px;height:24px;background:#2d2d2d;"></div>
<div style="left:570px;top:238px;width:1px;height:24px;background:#2d2d2d;"></div>
<div style="left:616px;top:238px;width:1px;height:24px;background:#2d2d2d;"></div>
<div style="left:656px;top:238px;width:1px;height:24px;background:#2d2d2d;"></div>
<div style="left:708px;top:238px;width:1px;height:24px;background:#2d2d2d;"></div>
<div style="left:784px;top:238px;width:1px;height:24px;background:#2d2d2d;"></div>
<div style="left:263px;top:261px;width:901px;height:1px;background:#3a3a3a;"></div>
<span style="left:254.00px;top:242.50px;height:16px;line-height:16px;font-size:12px;color:#f2f2f2;letter-spacing:0.000px;">2</span>
<span style="left:267.00px;top:242.00px;height:16px;line-height:16px;font-size:12px;color:#d2d2d2;letter-spacing:0.425px;">dbname</span>
<span style="left:337.00px;top:242.00px;height:16px;line-height:16px;font-size:12px;color:#d2d2d2;letter-spacing:-0.062px;">TEXT</span>
<div style="left:263px;top:262px;width:901px;height:24px;background:#191919;"></div>
<div style="left:252px;top:262px;width:11px;height:23px;background:#505050;box-sizing:border-box;border-top:1px solid #5c5c5c;"></div>
<div style="left:333px;top:262px;width:1px;height:24px;background:#2d2d2d;"></div>
<div style="left:406px;top:262px;width:1px;height:24px;background:#2d2d2d;"></div>
<div style="left:464px;top:262px;width:1px;height:24px;background:#2d2d2d;"></div>
<div style="left:519px;top:262px;width:1px;height:24px;background:#2d2d2d;"></div>
<div style="left:570px;top:262px;width:1px;height:24px;background:#2d2d2d;"></div>
<div style="left:616px;top:262px;width:1px;height:24px;background:#2d2d2d;"></div>
<div style="left:656px;top:262px;width:1px;height:24px;background:#2d2d2d;"></div>
<div style="left:708px;top:262px;width:1px;height:24px;background:#2d2d2d;"></div>
<div style="left:784px;top:262px;width:1px;height:24px;background:#2d2d2d;"></div>
<div style="left:263px;top:285px;width:901px;height:1px;background:#2d2d2d;"></div>
<span style="left:254.00px;top:266.50px;height:16px;line-height:16px;font-size:12px;color:#f2f2f2;letter-spacing:0.000px;">3</span>
<span style="left:267.00px;top:266.00px;height:16px;line-height:16px;font-size:12px;color:#d2d2d2;letter-spacing:0.542px;">date</span>
<span style="left:337.00px;top:266.00px;height:16px;line-height:16px;font-size:12px;color:#d2d2d2;letter-spacing:-0.469px;">INTEGER</span>
<div style="left:263px;top:286px;width:901px;height:24px;background:#353535;"></div>
<div style="left:252px;top:286px;width:11px;height:23px;background:#505050;box-sizing:border-box;border-top:1px solid #5c5c5c;"></div>
<div style="left:333px;top:286px;width:1px;height:24px;background:#2d2d2d;"></div>
<div style="left:406px;top:286px;width:1px;height:24px;background:#2d2d2d;"></div>
<div style="left:464px;top:286px;width:1px;height:24px;background:#2d2d2d;"></div>
<div style="left:519px;top:286px;width:1px;height:24px;background:#2d2d2d;"></div>
<div style="left:570px;top:286px;width:1px;height:24px;background:#2d2d2d;"></div>
<div style="left:616px;top:286px;width:1px;height:24px;background:#2d2d2d;"></div>
<div style="left:656px;top:286px;width:1px;height:24px;background:#2d2d2d;"></div>
<div style="left:708px;top:286px;width:1px;height:24px;background:#2d2d2d;"></div>
<div style="left:784px;top:286px;width:1px;height:24px;background:#2d2d2d;"></div>
<div style="left:263px;top:309px;width:901px;height:1px;background:#3a3a3a;"></div>
<span style="left:254.00px;top:290.50px;height:16px;line-height:16px;font-size:12px;color:#f2f2f2;letter-spacing:0.000px;">4</span>
<span style="left:267.00px;top:290.00px;height:16px;line-height:16px;font-size:12px;color:#d2d2d2;letter-spacing:0.479px;">time_spent</span>
<span style="left:337.00px;top:290.00px;height:16px;line-height:16px;font-size:12px;color:#d2d2d2;letter-spacing:-0.469px;">INTEGER</span>
<div style="left:263px;top:310px;width:901px;height:24px;background:#191919;"></div>
<div style="left:252px;top:310px;width:11px;height:23px;background:#505050;box-sizing:border-box;border-top:1px solid #5c5c5c;"></div>
<div style="left:333px;top:310px;width:1px;height:24px;background:#2d2d2d;"></div>
<div style="left:406px;top:310px;width:1px;height:24px;background:#2d2d2d;"></div>
<div style="left:464px;top:310px;width:1px;height:24px;background:#2d2d2d;"></div>
<div style="left:519px;top:310px;width:1px;height:24px;background:#2d2d2d;"></div>
<div style="left:570px;top:310px;width:1px;height:24px;background:#2d2d2d;"></div>
<div style="left:616px;top:310px;width:1px;height:24px;background:#2d2d2d;"></div>
<div style="left:656px;top:310px;width:1px;height:24px;background:#2d2d2d;"></div>
<div style="left:708px;top:310px;width:1px;height:24px;background:#2d2d2d;"></div>
<div style="left:784px;top:310px;width:1px;height:24px;background:#2d2d2d;"></div>
<div style="left:263px;top:333px;width:901px;height:1px;background:#2d2d2d;"></div>
<span style="left:254.00px;top:314.50px;height:16px;line-height:16px;font-size:12px;color:#f2f2f2;letter-spacing:0.000px;">5</span>
<span style="left:267.00px;top:314.00px;height:16px;line-height:16px;font-size:12px;color:#d2d2d2;letter-spacing:0.896px;">rows</span>
<span style="left:337.00px;top:314.00px;height:16px;line-height:16px;font-size:12px;color:#d2d2d2;letter-spacing:-0.469px;">INTEGER</span>
<div style="left:263px;top:334px;width:901px;height:23px;background:#353535;"></div>
<div style="left:252px;top:334px;width:11px;height:23px;background:#505050;box-sizing:border-box;border-top:1px solid #5c5c5c;"></div>
<div style="left:333px;top:334px;width:1px;height:23px;background:#2d2d2d;"></div>
<div style="left:406px;top:334px;width:1px;height:23px;background:#2d2d2d;"></div>
<div style="left:464px;top:334px;width:1px;height:23px;background:#2d2d2d;"></div>
<div style="left:519px;top:334px;width:1px;height:23px;background:#2d2d2d;"></div>
<div style="left:570px;top:334px;width:1px;height:23px;background:#2d2d2d;"></div>
<div style="left:616px;top:334px;width:1px;height:23px;background:#2d2d2d;"></div>
<div style="left:656px;top:334px;width:1px;height:23px;background:#2d2d2d;"></div>
<div style="left:708px;top:334px;width:1px;height:23px;background:#2d2d2d;"></div>
<div style="left:784px;top:334px;width:1px;height:23px;background:#2d2d2d;"></div>
<span style="left:254.00px;top:338.50px;height:16px;line-height:16px;font-size:12px;color:#f2f2f2;letter-spacing:0.000px;">6</span>
<span style="left:267.00px;top:338.00px;height:16px;line-height:16px;font-size:12px;color:#d2d2d2;letter-spacing:0.344px;">sql</span>
<span style="left:337.00px;top:338.00px;height:16px;line-height:16px;font-size:12px;color:#d2d2d2;letter-spacing:-0.062px;">TEXT</span>
<svg style="left:429px;top:216px" width="12" height="18" viewBox="0 0 12 18"><path d="M4.400 8.500h2.700v7.300l-1.300 1.200-1.400-1.200z" fill="#e6bb52"/><path d="M7.100 10.300h1.300v1.300h-1.300zM7.100 12.400h1.300v1.300h-1.300zM7.100 14.400h1.100v1.100h-1.100z" fill="#dcae42"/><path d="M5.100 9v7" stroke="#f8e29a" stroke-width=".7"/><ellipse cx="6.100" cy="5.200" rx="4.500" ry="3.800" fill="#f0cb62" stroke="#d9a632" stroke-width=".7"/><ellipse cx="6.100" cy="6.500" rx="3" ry="1.800" fill="#f6dc8c" opacity=".8"/><path d="M3.400 5.200a2.700 2.300 0 0 1 5.400 0z" fill="#6b5c12"/><path d="M4 3.200a2.700 1.500 0 0 1 4.200 0" fill="none" stroke="#fbeeb8" stroke-width=".7"/></svg>
<div style="left:1166px;top:178px;width:13px;height:179px;background:#4a4a4a;"></div>
<div style="left:1166px;top:178px;width:13px;height:13px;background:#505050;box-sizing:border-box;border:1px solid #686868;"></div>
<svg style="left:1168px;top:182px" width="9" height="5" viewBox="0 0 9 5"><path d="M0 4.500h8.500L4.250 0z" fill="#dcdcdc"/></svg>
<div style="left:1166px;top:344px;width:13px;height:13px;background:#505050;box-sizing:border-box;border:1px solid #686868;"></div>
<svg style="left:1168px;top:348px" width="9" height="5" viewBox="0 0 9 5"><path d="M0 0h8.500L4.250 4.500z" fill="#dcdcdc"/></svg>
<div style="left:1166px;top:192px;width:13px;height:126px;background:#505050;box-sizing:border-box;border:1px solid #6a6a6a;"></div>
<div style="left:709px;top:358px;width:2px;height:2px;background:#858585;"></div>
<div style="left:709px;top:590px;width:2px;height:2px;background:#707070;"></div>
<div style="left:712px;top:358px;width:2px;height:2px;background:#858585;"></div>
<div style="left:712px;top:590px;width:2px;height:2px;background:#707070;"></div>
<div style="left:715px;top:358px;width:2px;height:2px;background:#858585;"></div>
<div style="left:715px;top:590px;width:2px;height:2px;background:#707070;"></div>
<div style="left:718px;top:358px;width:2px;height:2px;background:#858585;"></div>
<div style="left:718px;top:590px;width:2px;height:2px;background:#707070;"></div>
<div style="left:721px;top:358px;width:2px;height:2px;background:#858585;"></div>
<div style="left:721px;top:590px;width:2px;height:2px;background:#707070;"></div>
<div style="left:724px;top:358px;width:2px;height:2px;background:#858585;"></div>
<div style="left:724px;top:590px;width:2px;height:2px;background:#707070;"></div>
<svg style="left:263px;top:371px" width="16" height="16" viewBox="0 0 16 16"><rect x="0.75" y="1" width="14.5" height="13" fill="#fafdfd"/><rect x="1.75" y="2" width="12.5" height="11" fill="#c4cccc"/><rect x="1.75" y="2" width="12.5" height="2.6" fill="#2fb3f0"/><rect x="1.75" y="2" width="2.7" height="11" fill="#2fb3f0"/><rect x="2.65" y="2.90" width="1" height="1.00" fill="#8adcf9"/><rect x="4.75" y="2.90" width="2.09" height="1.00" fill="#8adcf9"/><rect x="7.92" y="2.90" width="2.09" height="1.00" fill="#8adcf9"/><rect x="11.08" y="2.90" width="2.09" height="1.00" fill="#8adcf9"/><rect x="2.65" y="5.10" width="1" height="1.00" fill="#8adcf9"/><rect x="4.75" y="5.10" width="2.09" height="1.00" fill="#ffffff"/><rect x="7.92" y="5.10" width="2.09" height="1.00" fill="#ffffff"/><rect x="11.08" y="5.10" width="2.09" height="1.00" fill="#ffffff"/><rect x="2.65" y="7.10" width="1" height="1.00" fill="#8adcf9"/><rect x="4.75" y="7.10" width="2.09" height="1.00" fill="#ffffff"/><rect x="7.92" y="7.10" width="2.09" height="1.00" fill="#ffffff"/><rect x="11.08" y="7.10" width="2.09" height="1.00" fill="#ffffff"/><rect x="2.65" y="9.10" width="1" height="1.00" fill="#8adcf9"/><rect x="4.75" y="9.10" width="2.09" height="1.00" fill="#ffffff"/><rect x="7.92" y="9.10" width="2.09" height="1.00" fill="#ffffff"/><rect x="11.08" y="9.10" width="2.09" height="1.00" fill="#ffffff"/><rect x="2.65" y="11.10" width="1" height="1.00" fill="#8adcf9"/><rect x="4.75" y="11.10" width="2.09" height="1.00" fill="#ffffff"/><rect x="7.92" y="11.10" width="2.09" height="1.00" fill="#ffffff"/><rect x="11.08" y="11.10" width="2.09" height="1.00" fill="#ffffff"/><path d="M3 3.500L7.500 .8 15.300 2.300 15.600 4.600 12.500 6.600 9.500 8.800 6.500 7.200z" fill="#e8b478" stroke="#a86a2a" stroke-width=".5"/><path d="M5 3.200l4 4.500M7 2l4.500 4.800M9.500 1.500l4 4M12 2l3 2.800M4.500 5.500L9 1M7 7l6-5M10 7.500l5-4" stroke="#a86a2a" stroke-width=".45" fill="none"/><circle cx="12" cy="11.7" r="3.6" fill="url(#ggreen)" stroke="#0a6e0a" stroke-width=".5"/><path d="M9.8 11.7H14.2M12 9.5V13.899999999999999" stroke="#fff" stroke-width="1.4"/></svg>
<svg style="left:296px;top:371px" width="16" height="16" viewBox="0 0 16 16"><rect x="0.75" y="1" width="14.5" height="13" fill="#dcdcdc"/><rect x="1.75" y="2" width="12.5" height="11" fill="#b4b4b4"/><rect x="1.75" y="2" width="12.5" height="2.6" fill="#a0a0a0"/><rect x="1.75" y="2" width="2.7" height="11" fill="#a0a0a0"/><rect x="2.65" y="2.90" width="1" height="1.00" fill="#c6c6c6"/><rect x="4.75" y="2.90" width="2.09" height="1.00" fill="#c6c6c6"/><rect x="7.92" y="2.90" width="2.09" height="1.00" fill="#c6c6c6"/><rect x="11.08" y="2.90" width="2.09" height="1.00" fill="#c6c6c6"/><rect x="2.65" y="5.10" width="1" height="1.00" fill="#c6c6c6"/><rect x="4.75" y="5.10" width="2.09" height="1.00" fill="#e2e2e2"/><rect x="7.92" y="5.10" width="2.09" height="1.00" fill="#e2e2e2"/><rect x="11.08" y="5.10" width="2.09" height="1.00" fill="#e2e2e2"/><rect x="2.65" y="7.10" width="1" height="1.00" fill="#c6c6c6"/><rect x="4.75" y="7.10" width="2.09" height="1.00" fill="#e2e2e2"/><rect x="7.92" y="7.10" width="2.09" height="1.00" fill="#e2e2e2"/><rect x="11.08" y="7.10" width="2.09" height="1.00" fill="#e2e2e2"/><rect x="2.65" y="9.10" width="1" height="1.00" fill="#c6c6c6"/><rect x="4.75" y="9.10" width="2.09" height="1.00" fill="#e2e2e2"/><rect x="7.92" y="9.10" width="2.09" height="1.00" fill="#e2e2e2"/><rect x="11.08" y="9.10" width="2.09" height="1.00" fill="#e2e2e2"/><rect x="2.65" y="11.10" width="1" height="1.00" fill="#c6c6c6"/><rect x="4.75" y="11.10" width="2.09" height="1.00" fill="#e2e2e2"/><rect x="7.92" y="11.10" width="2.09" height="1.00" fill="#e2e2e2"/><rect x="11.08" y="11.10" width="2.09" height="1.00" fill="#e2e2e2"/><path d="M3 3.500L7.500 .8 15.300 2.300 15.600 4.600 12.500 6.600 9.500 8.800 6.500 7.200z" fill="#a4a4a4" stroke="#707070" stroke-width=".5"/><path d="M5 3.200l4 4.500M7 2l4.500 4.800M9.500 1.500l4 4M12 2l3 2.800M4.500 5.500L9 1M7 7l6-5M10 7.500l5-4" stroke="#707070" stroke-width=".45" fill="none"/><path d="M8.300 14.800l.8-2.600 5.200-5.400 1.200 1.200-5.200 5.400z" fill="#cfcfcf" stroke="#6a6a6a" stroke-width=".6"/></svg>
<svg style="left:329px;top:371px" width="16" height="16" viewBox="0 0 16 16"><g transform="translate(-1 0)"><rect x="1.8" y="1.5" width="13.2" height="13.5" fill="#dcdcdc"/><rect x="2.8" y="2.5" width="11.2" height="11.5" fill="#b4b4b4"/><rect x="2.8" y="2.5" width="11.2" height="2.6" fill="#a0a0a0"/><rect x="2.8" y="2.5" width="2.7" height="11.5" fill="#a0a0a0"/><rect x="3.70" y="3.27" width="1" height="1.06" fill="#c6c6c6"/><rect x="5.80" y="3.27" width="1.80" height="1.06" fill="#c6c6c6"/><rect x="8.53" y="3.27" width="1.80" height="1.06" fill="#c6c6c6"/><rect x="11.27" y="3.27" width="1.80" height="1.06" fill="#c6c6c6"/><rect x="3.70" y="5.60" width="1" height="1.06" fill="#c6c6c6"/><rect x="5.80" y="5.60" width="1.80" height="1.06" fill="#e2e2e2"/><rect x="8.53" y="5.60" width="1.80" height="1.06" fill="#e2e2e2"/><rect x="11.27" y="5.60" width="1.80" height="1.06" fill="#e2e2e2"/><rect x="3.70" y="7.72" width="1" height="1.06" fill="#c6c6c6"/><rect x="5.80" y="7.72" width="1.80" height="1.06" fill="#e2e2e2"/><rect x="8.53" y="7.72" width="1.80" height="1.06" fill="#e2e2e2"/><rect x="11.27" y="7.72" width="1.80" height="1.06" fill="#e2e2e2"/><rect x="3.70" y="9.85" width="1" height="1.06" fill="#c6c6c6"/><rect x="5.80" y="9.85" width="1.80" height="1.06" fill="#e2e2e2"/><rect x="8.53" y="9.85" width="1.80" height="1.06" fill="#e2e2e2"/><rect x="11.27" y="9.85" width="1.80" height="1.06" fill="#e2e2e2"/><rect x="3.70" y="11.97" width="1" height="1.06" fill="#c6c6c6"/><rect x="5.80" y="11.97" width="1.80" height="1.06" fill="#e2e2e2"/><rect x="8.53" y="11.97" width="1.80" height="1.06" fill="#e2e2e2"/><rect x="11.27" y="11.97" width="1.80" height="1.06" fill="#e2e2e2"/><rect x="8.400" y="3.500" width="2" height="12.300" fill="#8c8c8c" stroke="#e4e4e4" stroke-width=".6"/><path d="M7.700 2.500h3.400L9.400 4.600z" fill="#4a4a4a"/></g></svg>
<svg style="left:362px;top:371px" width="16" height="16" viewBox="0 0 16 16"><rect x="1.800" y="1.700" width="12.400" height="12.200" rx="2" fill="url(#ggray)"/><path d="M8 11.200V4.200M4.600 7.400L8 4l3.400 3.400" fill="none" stroke="#e4e4e4" stroke-width="2"/></svg>
<svg style="left:395px;top:371px" width="16" height="16" viewBox="0 0 16 16"><rect x="1.800" y="1.700" width="12.400" height="12.200" rx="2" fill="url(#ggray)"/><path d="M8 3.700v7M4.600 7.500L8 10.900l3.400-3.400" fill="none" stroke="#e4e4e4" stroke-width="2"/></svg>
<div style="left:423px;top:370px;width:2px;height:19px;background:#333;"></div>
<svg style="left:436px;top:371px" width="16" height="16" viewBox="0 0 16 16"><circle cx="6" cy="4.500" r="3.300" fill="none" stroke="#c4c4c4" stroke-width="1.600"/><path d="M6 7.800V15M6 11.500h2.200M6 13.800h2.200" stroke="#c4c4c4" stroke-width="1.500" fill="none"/><path d="M9.500 12.200h4.500M11.750 10v4.500" stroke="#d8d8d8" stroke-width="1.300"/></svg>
<svg style="left:468px;top:371px" width="16" height="16" viewBox="0 0 16 16"><rect x="0.5" y="4" width="5.500" height="11" fill="#f4f4f4" stroke="#e0eaf0" stroke-width=".5"/><rect x="0.9" y="4.4" width="4.700" height="2.200" fill="#36b5f3"/><path d="M1.0 8.5h4.500M1.0 10.5h4.500M1.0 12.5h4.500" stroke="#b9c4cc" stroke-width=".7"/><rect x="10" y="1" width="5.500" height="9" fill="#f4f4f4" stroke="#e0eaf0" stroke-width=".5"/><rect x="10.4" y="1.4" width="4.700" height="2.200" fill="#36b5f3"/><path d="M10.5 5.5h4.500M10.5 7.5h4.500M10.5 9.5h4.500" stroke="#b9c4cc" stroke-width=".7"/><path d="M6 10L10 5" stroke="#f2f2f2" stroke-width="1.100"/><circle cx="12.2" cy="12" r="3.6" fill="url(#ggreen)" stroke="#0a6e0a" stroke-width=".5"/><path d="M10.0 12H14.399999999999999M12.2 9.8V14.2" stroke="#fff" stroke-width="1.4"/></svg>
<svg style="left:501px;top:371px" width="16" height="16" viewBox="0 0 16 16"><rect x="5" y=".8" width="5.500" height="7" rx="1" fill="#2f8fe6" stroke="#1a62b0" stroke-width=".6"/><rect x=".8" y="7" width="7" height="6.500" rx="1" fill="#dc1f26" stroke="#9a0f14" stroke-width=".6"/><rect x="8.500" y="8" width="6" height="6" rx="1" fill="#5cb82a"/><circle cx="12" cy="12" r="3.6" fill="url(#ggreen)" stroke="#0a6e0a" stroke-width=".5"/><path d="M9.8 12H14.2M12 9.8V14.2" stroke="#fff" stroke-width="1.4"/></svg>
<svg style="left:535px;top:371px" width="16" height="16" viewBox="0 0 16 16"><rect x="1.500" y="2" width="11.500" height="13" rx="1" fill="#b4642c" stroke="#7c3f14" stroke-width=".6"/><rect x="3" y="3.500" width="8.500" height="10.500" fill="#fafafa"/><rect x="5" y=".8" width="4.500" height="2.600" rx=".8" fill="#bdbdbd" stroke="#8a8a8a" stroke-width=".4"/><path d="M4 6.500l1 1 1.800-2M4 10l1 1 1.800-2" fill="none" stroke="#2ca02c" stroke-width="1.100"/><path d="M8 7h2.500M8 10.500h1" stroke="#bbb" stroke-width=".8"/><circle cx="12.2" cy="12" r="3.6" fill="url(#ggreen)" stroke="#0a6e0a" stroke-width=".5"/><path d="M10.0 12H14.399999999999999M12.2 9.8V14.2" stroke="#fff" stroke-width="1.4"/></svg>
<div style="left:251px;top:399px;width:928px;height:187px;background:#2a2a2a;"></div>
<div style="left:252px;top:400px;width:926px;height:1px;background:#6a6a6a;"></div>
<div style="left:252px;top:401px;width:926px;height:18px;background:#505050;"></div>
<div style="left:290px;top:402px;width:1px;height:16px;background:#474747;"></div>
<div style="left:291px;top:401px;width:1px;height:17px;background:#6c6c6c;"></div>
<div style="left:333px;top:402px;width:1px;height:16px;background:#474747;"></div>
<div style="left:334px;top:401px;width:1px;height:17px;background:#6c6c6c;"></div>
<div style="left:252px;top:419px;width:926px;height:166px;background:#191919;"></div>
<span style="left:258.70px;top:402.50px;height:16px;line-height:16px;font-size:12px;color:#f2f2f2;letter-spacing:0.333px;">Type</span>
<span style="left:297.50px;top:402.50px;height:16px;line-height:16px;font-size:12px;color:#f2f2f2;letter-spacing:0.000px;">Name</span>
<span style="left:738.00px;top:402.50px;height:16px;line-height:16px;font-size:12px;color:#f2f2f2;letter-spacing:0.219px;">Details</span>
<span style="left:253.50px;top:596.00px;height:16px;line-height:16px;font-size:12px;color:#f2f2f2;letter-spacing:-0.500px;">Status</span>
<svg style="left:1155px;top:598px" width="26" height="12" viewBox="0 0 26 12"><rect x="0.5" y=".5" width="10" height="10" rx="1.800" fill="none" stroke="#8c8882" stroke-width=".9"/><path d="M0.3 2.500V.8a.5.5 0 0 1 .5-.5H2.5M8.5 .3h1.700a.5.5 0 0 1 .5.5V2.500M10.7 8.500v1.700a.5.5 0 0 1-.5.5H8.5M2.5 10.700H0.8a.5.5 0 0 1-.5-.5V8.500" fill="none" stroke="#b0aca4" stroke-width=".7"/><rect x="2.500" y="4.500" width="4" height="4" fill="none" stroke="#8c8882" stroke-width=".9"/><path d="M4.500 4V2.500h4v4H7" fill="none" stroke="#8c8882" stroke-width=".9"/><rect x="14.5" y=".5" width="10" height="10" rx="1.800" fill="none" stroke="#8c8882" stroke-width=".9"/><path d="M14.3 2.500V.8a.5.5 0 0 1 .5-.5H16.5M22.5 .3h1.700a.5.5 0 0 1 .5.5V2.500M24.7 8.500v1.700a.5.5 0 0 1-.5.5H22.5M16.5 10.700H14.8a.5.5 0 0 1-.5-.5V8.500" fill="none" stroke="#b0aca4" stroke-width=".7"/><path d="M16 2l7 7M23 2l-7 7" stroke="#8c8882" stroke-width="1.500"/></svg>
<svg style="left:5px;top:728px" width="5" height="18" viewBox="0 0 5 18"><rect x="0" y="0" width="2" height="2" fill="#666"/><rect x="3" y="0" width="2" height="2" fill="#666"/><rect x="0" y="3" width="2" height="2" fill="#666"/><rect x="3" y="3" width="2" height="2" fill="#666"/><rect x="0" y="6" width="2" height="2" fill="#666"/><rect x="3" y="6" width="2" height="2" fill="#666"/><rect x="0" y="9" width="2" height="2" fill="#666"/><rect x="3" y="9" width="2" height="2" fill="#666"/><rect x="0" y="12" width="2" height="2" fill="#666"/><rect x="3" y="12" width="2" height="2" fill="#666"/><rect x="0" y="15" width="2" height="2" fill="#666"/><rect x="3" y="15" width="2" height="2" fill="#666"/></svg>
<svg style="left:16px;top:729px" width="16" height="16" viewBox="0 0 16 16"><path d="M3.300 1.500h10.200l-1.200 1.500v10.700h-10.300l1.300-1.700z" fill="url(#gpage)" stroke="#fbffff" stroke-width=".8"/><path d="M1.800 13.800h9.500" stroke="#fff" stroke-width="1.300"/><g transform="translate(0 .8)"><path d="M7.300 15l.6-2 5-5 1.300 1.300-5 5z" fill="#e9d85c" stroke="#8a7410" stroke-width=".45"/><path d="M8.800 13.800l1-1M10 12.600l1-1M11.200 11.400l1-1" stroke="#a08a1c" stroke-width=".5"/><path d="M13.200 8.300l.8-.8" stroke="#fff" stroke-width="1.200"/><circle cx="14.600" cy="6.800" r="1.100" fill="#e02a2a"/></g></svg>
<span style="left:33.50px;top:728.70px;height:16px;line-height:16px;font-size:12px;color:#f2f2f2;letter-spacing:-0.882px;word-spacing:0.882px;">SQL editor 1</span>
<div style="left:116px;top:722px;width:175px;height:29px;background:#484848;box-sizing:border-box;border:1px solid #5e5e5e;border-radius:3px;"></div>
<svg style="left:118px;top:728px" width="16" height="16" viewBox="0 0 16 16"><rect x="0.6" y="0.9" width="14.4" height="13" fill="#fafdfd"/><rect x="1.6" y="1.9" width="12.4" height="11" fill="#c4cccc"/><rect x="1.6" y="1.9" width="12.4" height="2.6" fill="#2fb3f0"/><rect x="1.6" y="1.9" width="2.7" height="11" fill="#2fb3f0"/><rect x="2.50" y="2.80" width="1" height="1.00" fill="#8adcf9"/><rect x="4.60" y="2.80" width="2.07" height="1.00" fill="#8adcf9"/><rect x="7.73" y="2.80" width="2.07" height="1.00" fill="#8adcf9"/><rect x="10.87" y="2.80" width="2.07" height="1.00" fill="#8adcf9"/><rect x="2.50" y="5.00" width="1" height="1.00" fill="#8adcf9"/><rect x="4.60" y="5.00" width="2.07" height="1.00" fill="#ffffff"/><rect x="7.73" y="5.00" width="2.07" height="1.00" fill="#ffffff"/><rect x="10.87" y="5.00" width="2.07" height="1.00" fill="#ffffff"/><rect x="2.50" y="7.00" width="1" height="1.00" fill="#8adcf9"/><rect x="4.60" y="7.00" width="2.07" height="1.00" fill="#ffffff"/><rect x="7.73" y="7.00" width="2.07" height="1.00" fill="#ffffff"/><rect x="10.87" y="7.00" width="2.07" height="1.00" fill="#ffffff"/><rect x="2.50" y="9.00" width="1" height="1.00" fill="#8adcf9"/><rect x="4.60" y="9.00" width="2.07" height="1.00" fill="#ffffff"/><rect x="7.73" y="9.00" width="2.07" height="1.00" fill="#ffffff"/><rect x="10.87" y="9.00" width="2.07" height="1.00" fill="#ffffff"/><rect x="2.50" y="11.00" width="1" height="1.00" fill="#8adcf9"/><rect x="4.60" y="11.00" width="2.07" height="1.00" fill="#ffffff"/><rect x="7.73" y="11.00" width="2.07" height="1.00" fill="#ffffff"/><rect x="10.87" y="11.00" width="2.07" height="1.00" fill="#ffffff"/></svg>
<span style="left:135.50px;top:728.70px;height:16px;line-height:16px;font-size:12px;color:#f2f2f2;letter-spacing:-0.435px;word-spacing:0.435px;">sqleditor_history (settings3)</span>
</body></html>
